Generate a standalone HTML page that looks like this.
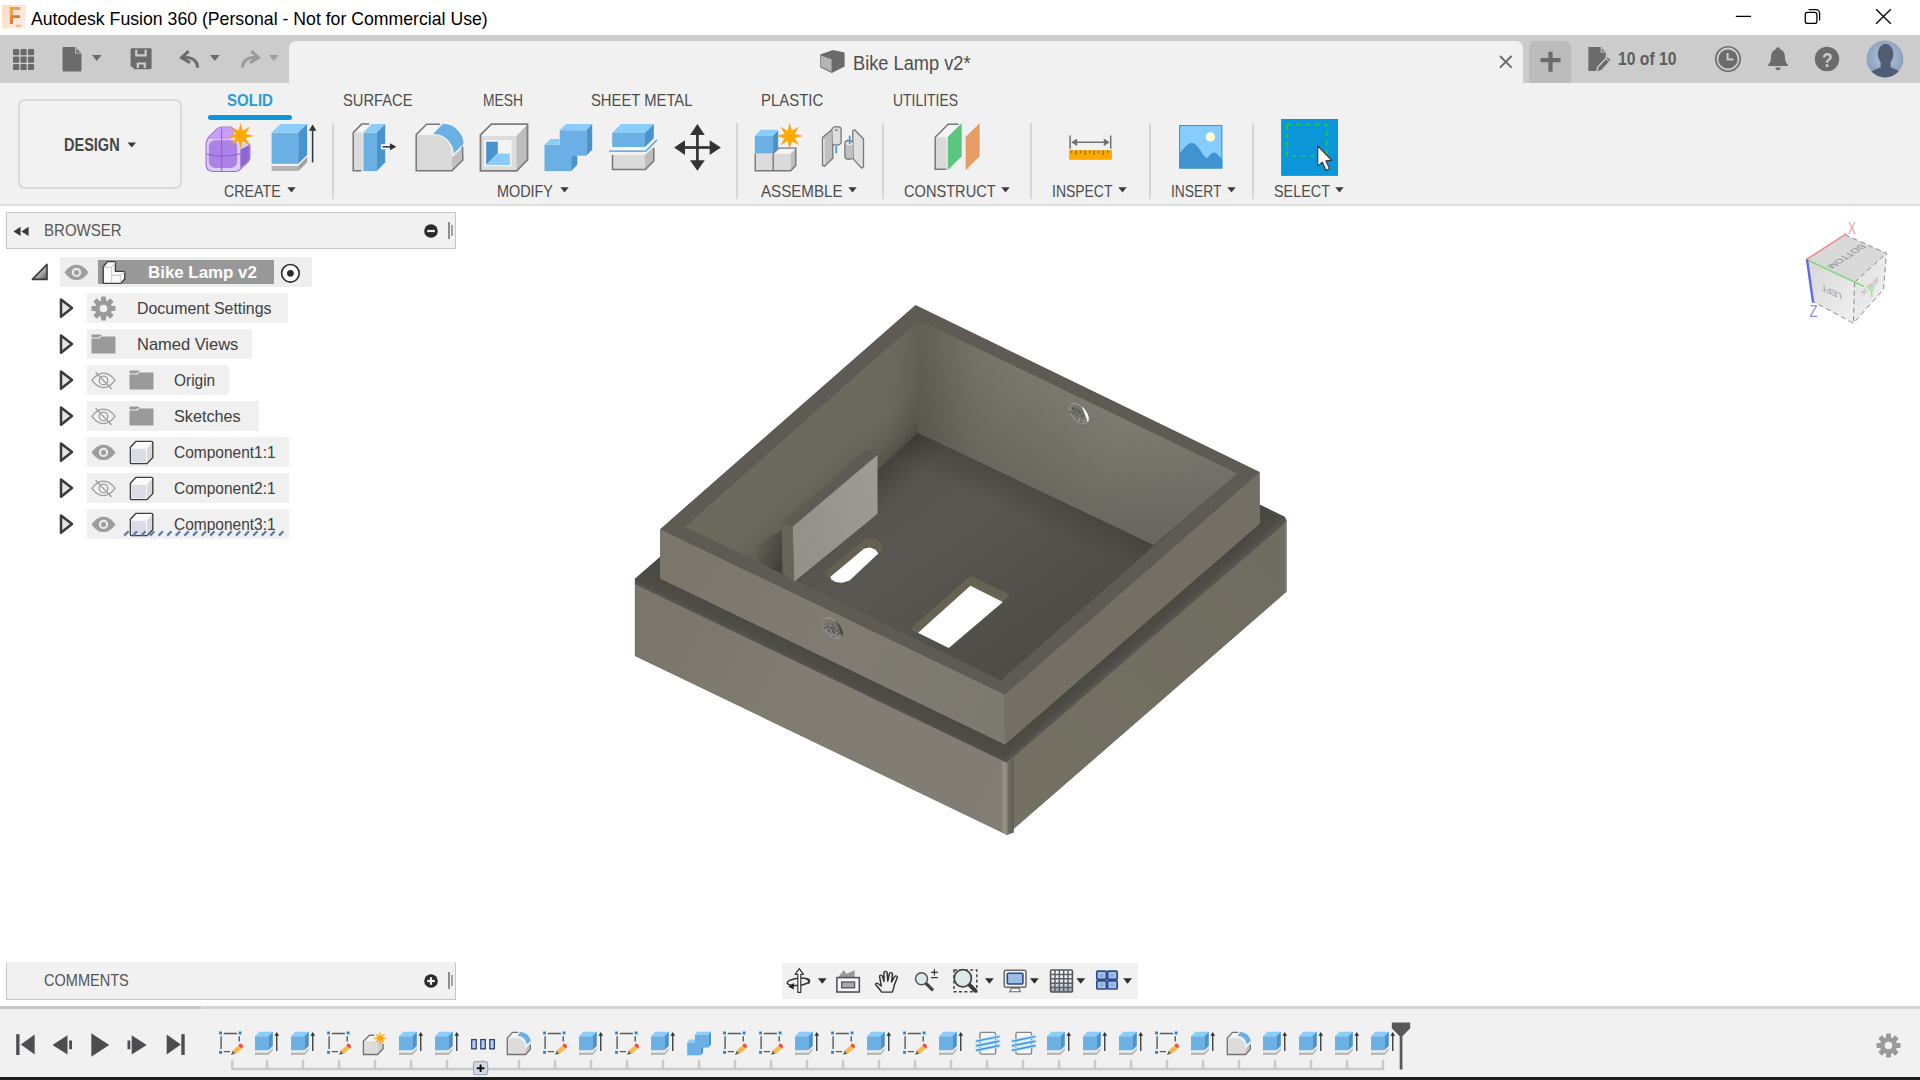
<!DOCTYPE html>
<html lang="en"><head><meta charset="utf-8"><title>Autodesk Fusion 360</title>
<style>
html,body{margin:0;padding:0;}
body{width:1920px;height:1080px;overflow:hidden;background:#fff;position:relative;font-family:"Liberation Sans",sans-serif;}
.a{position:absolute;display:block;}
.t{position:absolute;white-space:nowrap;transform-origin:0 0;}
</style></head><body>
<div class="a" style="left:0px;top:0px;width:1920px;height:35px;background:#fff;"></div>
<svg class="a" style="left:2px;top:5px;" width="24" height="24" viewBox="0 0 24 24"><defs><linearGradient id="fg" x1="0" y1="0" x2="1" y2="1"><stop offset="0" stop-color="#fbdcc0"/><stop offset=".5" stop-color="#fbe6d3"/><stop offset="1" stop-color="#fdf1e6"/></linearGradient>
<linearGradient id="ff" x1="0" y1="0" x2=".4" y2="1"><stop offset="0" stop-color="#dd8530"/><stop offset=".4" stop-color="#f3a546"/><stop offset=".6" stop-color="#d9802a"/><stop offset="1" stop-color="#c96f20"/></linearGradient></defs>
<rect x=".2" y="0" width="23.600" height="23.700" fill="url(#fg)"/>
<text transform="translate(6.800,19.200) scale(.8,1)" font-family="Liberation Sans, sans-serif" font-weight="bold" font-size="24.300" fill="url(#ff)">F</text>
<rect x="13.500" y="19.800" width="6" height="1.900" rx=".6" fill="#f2b47c"/></svg>
<div class="t" style="left:30.80px;top:10.40px;font-size:18.31px;line-height:18.31px;color:#000;transform:scaleX(0.9659);">Autodesk Fusion 360 (Personal - Not for Commercial Use)</div>
<svg class="a" style="left:1720px;top:0px;" width="200" height="35" viewBox="0 0 200 35"><g fill="none" stroke="#000" stroke-width="1.3">
<path d="M15.8 16.4H31"/>
<rect x="85.3" y="12.4" width="11.6" height="11" rx="2.2"/>
<path d="M88.6 9.6h7.4a3.6 3.6 0 0 1 3.6 3.6v7.2"/>
<path d="M156.1 9.3l14.7 14.5M170.8 9.3l-14.7 14.5"/></g></svg>
<div class="a" style="left:0px;top:35px;width:1920px;height:48px;background:#cccccc;"></div>
<div class="a" style="left:289px;top:40.5px;width:1234px;height:43px;background:#f1f1f1;border-radius:7px 7px 0 0;"></div>
<div class="a" style="left:1529px;top:41px;width:42px;height:42px;background:#bcbcbc;border-radius:6px 6px 0 0;"></div>
<svg class="a" style="left:1529px;top:41px;" width="42" height="42" viewBox="0 0 42 42"><path d="M11.5 19.2h20M21.5 10.8v20" stroke="#6b6b6b" stroke-width="4.2" fill="none"/></svg>
<svg class="a" style="left:13.3px;top:48.5px;" width="22" height="22" viewBox="0 0 22 22"><rect x="0.00" y="0.00" width="6.200" height="6.200" rx="1" fill="#6b6b6b"/><rect x="7.45" y="0.00" width="6.200" height="6.200" rx="1" fill="#6b6b6b"/><rect x="14.90" y="0.00" width="6.200" height="6.200" rx="1" fill="#6b6b6b"/><rect x="0.00" y="7.45" width="6.200" height="6.200" rx="1" fill="#6b6b6b"/><rect x="7.45" y="7.45" width="6.200" height="6.200" rx="1" fill="#6b6b6b"/><rect x="14.90" y="7.45" width="6.200" height="6.200" rx="1" fill="#6b6b6b"/><rect x="0.00" y="14.90" width="6.200" height="6.200" rx="1" fill="#6b6b6b"/><rect x="7.45" y="14.90" width="6.200" height="6.200" rx="1" fill="#6b6b6b"/><rect x="14.90" y="14.90" width="6.200" height="6.200" rx="1" fill="#6b6b6b"/></svg>
<svg class="a" style="left:62px;top:46px;" width="22" height="26" viewBox="0 0 22 26"><path d="M1.5 1h12l6 6.2v17.3a1 1 0 0 1-1 1h-17a1 1 0 0 1-1-1V2a1 1 0 0 1 1-1z" fill="#6b6b6b"/><path d="M13.2 1v6.6h6.4z" fill="#cccccc"/><path d="M14.2 2.6l4 4.2h-4z" fill="#6b6b6b"/></svg>
<svg class="a" style="left:91px;top:54px;" width="12" height="8" viewBox="0 0 12 8"><path d="M1 1h9.6l-4.8 6z" fill="#6b6b6b"/></svg>
<svg class="a" style="left:130px;top:48px;" width="22" height="22" viewBox="0 0 22 22"><path d="M2 .2h18.200a1.400 1.400 0 0 1 1.400 1.400v18.200a1.400 1.400 0 0 1-1.400 1.400H4.600L.6 17.800V1.600A1.400 1.400 0 0 1 2 .2z" fill="#6b6b6b"/><path d="M6.250 1.800V7.400H15.600V1.800" fill="none" stroke="#cccccc" stroke-width="2.200"/><path d="M7.800 20V15.500H14.800V20" fill="none" stroke="#cccccc" stroke-width="2.200"/></svg>
<svg class="a" style="left:178px;top:48px;" width="24" height="22" viewBox="0 0 24 22"><path d="M5 9.800C12 8.600 19 11 19.600 19.600" fill="none" stroke="#6b6b6b" stroke-width="3.100" stroke-linecap="butt"/><path d="M10.600 3.200L3.600 9.800l8.400 4.800" fill="none" stroke="#6b6b6b" stroke-width="3.100" stroke-linecap="butt" stroke-linejoin="miter"/></svg>
<svg class="a" style="left:209px;top:54px;" width="12" height="8" viewBox="0 0 12 8"><path d="M1 1h9.6l-4.8 6z" fill="#6b6b6b"/></svg>
<svg class="a" style="left:238px;top:48px;" width="24" height="22" viewBox="0 0 24 22"><path d="M19 9.800C12 8.600 5 11 4.400 19.600" fill="none" stroke="#9a9a9a" stroke-width="3.100"/><path d="M13.400 3.200L20.400 9.800l-8.400 4.800" fill="none" stroke="#9a9a9a" stroke-width="3.100"/></svg>
<svg class="a" style="left:268px;top:54px;" width="12" height="8" viewBox="0 0 12 8"><path d="M1 1h9.6l-4.8 6z" fill="#9d9d9d"/></svg>
<svg class="a" style="left:819px;top:49px;" width="27" height="25" viewBox="0 0 27 25"><path d="M1.2 5.4L14 1l11.6 2.6v14L12.8 24 1.2 18.2z" fill="#6a6a6a"/><path d="M1.8 6.4l10.8 3.8v12.6L1.8 17.6z" fill="#b4b4b4"/></svg>
<div class="t" style="left:852.50px;top:53.94px;font-size:19.33px;line-height:19.33px;color:#4f4f4f;transform:scaleX(0.9427);">Bike Lamp v2*</div>
<svg class="a" style="left:1498px;top:54px;" width="16" height="16" viewBox="0 0 16 16"><path d="M2 2l11.6 11.6M13.6 2L2 13.6" stroke="#6b6b6b" stroke-width="1.9" fill="none"/></svg>
<svg class="a" style="left:1587px;top:46px;" width="27" height="26" viewBox="0 0 27 26"><path d="M1.4 1h12.4l5 5.2v5.4l-8.6 9.4-1 4H1.4z" fill="#6b6b6b"/><path d="M13.6 1v5.4h5.2z" fill="#cccccc"/><path d="M14.6 2.6l2.8 3h-2.8z" fill="#6b6b6b"/><path d="M20.6 10.6l3.8 3.4-9.8 10.4-5 1.6 1.4-5z" fill="#6b6b6b" stroke="#cccccc" stroke-width="1.2"/><path d="M19 12.6l3.4 3.2" stroke="#cccccc" stroke-width="1.1"/></svg>
<div class="t" style="left:1618.00px;top:51.09px;font-size:17.73px;line-height:17.73px;color:#555;font-weight:bold;transform:scaleX(0.8856);opacity:.92;">10 of 10</div>
<svg class="a" style="left:1714px;top:45px;" width="28" height="28" viewBox="0 0 28 28"><circle cx="14" cy="14" r="12.2" fill="none" stroke="#6b6b6b" stroke-width="1.6"/><circle cx="14" cy="14" r="9.6" fill="#6b6b6b"/><path d="M13.6 8v6.6h5.8" fill="none" stroke="#cccccc" stroke-width="2"/></svg>
<svg class="a" style="left:1766px;top:46px;" width="24" height="26" viewBox="0 0 24 26"><path d="M12 1.2c1.3 0 2 .9 2 2 3.6 1.2 5 4.4 5 8.2 0 3.8 1.2 5.6 2.8 7.2v1.4H2.2v-1.4C3.800 17 5 15.200 5 11.400c0-3.800 1.400-7 5-8.200 0-1.100.700-2 2-2z" fill="#6b6b6b"/><path d="M9.400 21.600h5.200a2.600 2.600 0 0 1-5.200 0z" fill="#6b6b6b"/></svg>
<svg class="a" style="left:1814px;top:46px;" width="26" height="26" viewBox="0 0 26 26"><circle cx="13" cy="13" r="12.2" fill="#6b6b6b"/></svg>
<div class="t" style="left:1821.60px;top:50.03px;font-size:20.64px;line-height:20.64px;color:#cccccc;font-weight:bold;transform:scaleX(0.8419);">?</div>
<svg class="a" style="left:1866px;top:40px;" width="38" height="38" viewBox="0 0 38 38"><defs><radialGradient id="av" cx=".5" cy=".45" r=".6"><stop offset="0" stop-color="#b7c7dc"/><stop offset="1" stop-color="#8499b8"/></radialGradient><clipPath id="avc"><circle cx="19" cy="19" r="18.400"/></clipPath></defs>
<circle cx="19" cy="19" r="18.400" fill="url(#av)"/>
<g clip-path="url(#avc)" fill="#4f5d75"><ellipse cx="19.600" cy="14" rx="7.800" ry="10.200"/><path d="M14.600 20h10v7.400c5 1.400 9 3.600 10.400 6.400v6h-31v-6c1.400-2.800 5.600-5 10.600-6.400z"/></g></svg>
<div class="a" style="left:0px;top:83px;width:1920px;height:122px;background:#f1f1f1;"></div>
<div class="a" style="left:0px;top:204.4px;width:1920px;height:1.6px;background:#dedede;"></div>
<div class="a" style="left:17.5px;top:98.5px;width:164px;height:90.5px;background:#f2f2f2;box-sizing:border-box;border:2px solid #dadada;border-radius:7px;"></div>
<div class="t" style="left:63.80px;top:136.69px;font-size:17.73px;line-height:17.73px;color:#484848;font-weight:bold;transform:scaleX(0.8191);">DESIGN</div>
<svg class="a" style="left:127px;top:141.5px;" width="10" height="6" viewBox="0 0 10 6"><path d="M.5 .5h8.6L4.8 5.6z" fill="#3c3c3c"/></svg>
<div class="t" style="left:227.00px;top:92.18px;font-size:17.15px;line-height:17.15px;color:#2a9bd7;font-weight:bold;transform:scaleX(0.8779);">SOLID</div>
<div class="a" style="left:207.5px;top:114.6px;width:84.4px;height:5px;background:#0f96d8;border-radius:2.5px;"></div>
<div class="t" style="left:342.50px;top:92.18px;font-size:17.15px;line-height:17.15px;color:#4c4c4c;transform:scaleX(0.8581);">SURFACE</div>
<div class="t" style="left:482.50px;top:92.18px;font-size:17.15px;line-height:17.15px;color:#4c4c4c;transform:scaleX(0.8070);">MESH</div>
<div class="t" style="left:591.00px;top:92.18px;font-size:17.15px;line-height:17.15px;color:#4c4c4c;transform:scaleX(0.8636);">SHEET METAL</div>
<div class="t" style="left:760.80px;top:92.18px;font-size:17.15px;line-height:17.15px;color:#4c4c4c;transform:scaleX(0.8702);">PLASTIC</div>
<div class="t" style="left:893.00px;top:92.18px;font-size:17.15px;line-height:17.15px;color:#4c4c4c;transform:scaleX(0.8120);">UTILITIES</div>
<div class="t" style="left:224.30px;top:183.38px;font-size:17.15px;line-height:17.15px;color:#4c4c4c;transform:scaleX(0.8301);">CREATE</div>
<svg class="a" style="left:287px;top:186.5px;" width="10" height="6" viewBox="0 0 10 6"><path d="M.3 .3h8.4L4.5 5.6z" fill="#3c3c3c"/></svg>
<div class="t" style="left:497.00px;top:183.38px;font-size:17.15px;line-height:17.15px;color:#4c4c4c;transform:scaleX(0.8394);">MODIFY</div>
<svg class="a" style="left:559.5px;top:186.5px;" width="10" height="6" viewBox="0 0 10 6"><path d="M.3 .3h8.4L4.5 5.6z" fill="#3c3c3c"/></svg>
<div class="t" style="left:761.00px;top:183.38px;font-size:17.15px;line-height:17.15px;color:#4c4c4c;transform:scaleX(0.8816);">ASSEMBLE</div>
<svg class="a" style="left:847.5px;top:186.5px;" width="10" height="6" viewBox="0 0 10 6"><path d="M.3 .3h8.4L4.5 5.6z" fill="#3c3c3c"/></svg>
<div class="t" style="left:903.80px;top:183.38px;font-size:17.15px;line-height:17.15px;color:#4c4c4c;transform:scaleX(0.8517);">CONSTRUCT</div>
<svg class="a" style="left:1000.5px;top:186.5px;" width="10" height="6" viewBox="0 0 10 6"><path d="M.3 .3h8.4L4.5 5.6z" fill="#3c3c3c"/></svg>
<div class="t" style="left:1052.00px;top:183.38px;font-size:17.15px;line-height:17.15px;color:#4c4c4c;transform:scaleX(0.8137);">INSPECT</div>
<svg class="a" style="left:1117.5px;top:186.5px;" width="10" height="6" viewBox="0 0 10 6"><path d="M.3 .3h8.4L4.5 5.6z" fill="#3c3c3c"/></svg>
<div class="t" style="left:1170.50px;top:183.38px;font-size:17.15px;line-height:17.15px;color:#4c4c4c;transform:scaleX(0.8067);">INSERT</div>
<svg class="a" style="left:1227px;top:186.5px;" width="10" height="6" viewBox="0 0 10 6"><path d="M.3 .3h8.4L4.5 5.6z" fill="#3c3c3c"/></svg>
<div class="t" style="left:1274.00px;top:183.38px;font-size:17.15px;line-height:17.15px;color:#4c4c4c;transform:scaleX(0.8394);">SELECT</div>
<svg class="a" style="left:1335px;top:186.5px;" width="10" height="6" viewBox="0 0 10 6"><path d="M.3 .3h8.4L4.5 5.6z" fill="#3c3c3c"/></svg>
<div class="a" style="left:332px;top:122.5px;width:2px;height:76.5px;background:#d6d6d6;"></div>
<div class="a" style="left:735.5px;top:122.5px;width:2px;height:76.5px;background:#d6d6d6;"></div>
<div class="a" style="left:881.7px;top:122.5px;width:2px;height:76.5px;background:#d6d6d6;"></div>
<div class="a" style="left:1030px;top:122.5px;width:2px;height:76.5px;background:#d6d6d6;"></div>
<div class="a" style="left:1148.7px;top:122.5px;width:2px;height:76.5px;background:#d6d6d6;"></div>
<div class="a" style="left:1252px;top:122.5px;width:2px;height:76.5px;background:#d6d6d6;"></div>
<svg class="a" style="left:0px;top:118px;" width="1920" height="62" viewBox="0 0 1920 62"><g transform="translate(200,0)"><path d="M5.500 27Q5.500 21.500 9.500 17.500L16 11Q18.400 8.500 22 8.500H31L50.500 27V39.500Q50.500 42.200 48.500 44.200L40.500 51.800Q38.200 54 35 54H13.600Q5.500 54 5.500 46z" fill="#9a6ad2"/><path d="M6.600 27.200Q6.600 22 10.300 18.300L16.700 11.800Q18.800 9.600 22 9.600H30.600L49.400 27.400V39.300Q49.400 41.700 47.700 43.400L39.800 51Q37.800 52.900 35 52.900H13.800Q6.600 52.900 6.600 45.800z" fill="#ddcdf6"/><path d="M8.500 20.500L16.900 11.900Q19 9.700 22 9.700H31l5.500 5-6 6.300H12z" fill="#c79bff"/><path d="M40.300 31.500l9.100-4.600V39.200q0 2.400-1.700 4l-7.400 7z" fill="#9168d0"/><rect x="8.800" y="22.200" width="28.400" height="27.800" rx="6.500" fill="#ac82e8"/><path d="M21.700 11v41.800M6.800 36.200c10 2.400 22 2.400 33.400-.4M45.400 29v16.800" fill="none" stroke="#8a60c4" stroke-width="1"/><circle cx="40.600" cy="17.900" r="7.400" fill="#f1f1f1"/><polygon points="40.60,5.50 42.59,13.10 49.37,9.13 45.40,15.91 53.00,17.90 45.40,19.89 49.37,26.67 42.59,22.70 40.60,30.30 38.61,22.70 31.83,26.67 35.80,19.89 28.20,17.90 35.80,15.91 31.83,9.13 38.61,13.10" fill="#ffa800" stroke="#f0a020" stroke-width=".4"/></g><g transform="translate(200,0)"><polygon points="71.6,48 98.2,48 107.1,39.300 107.1,44.300 98.2,53.100 71.6,53.100" fill="#b4b4b4" /><polygon points="98.2,48 107.1,39.300 107.1,44.300 98.2,53.100" fill="#a2a2a2" /><polygon points="71.6,14.600 98.2,14.600 98.2,45.800 71.6,45.800" fill="#6ab0e4" /><polygon points="71.6,14.600 80.6,6 107.1,6 98.2,14.600" fill="#8accfa" /><polygon points="98.2,14.600 107.1,6 107.1,36.900 98.2,45.800" fill="#4994cf" /><path d="M112.600 10v34.400" stroke="#333" stroke-width="1.500"/><path d="M108.900 12.700h7.500L112.650 6.600z" fill="#333"/></g><g transform="translate(340,0)"><polygon points="13.200,14.600 21.700,6.100 30,6.100 22,14.600" fill="#f5f5f5" /><polygon points="13.200,14.600 22.400,14.600 22.400,52.800 13.200,52.800" fill="#dadada" /><path d="M21.400 52.800H13.200V14.600L21.700 6.100H29.200" fill="none" stroke="#777" stroke-width="1.500"/><polygon points="23.400,14.600 36.900,14.600 36.900,53.100 23.400,53.100" fill="#6ab0e4" /><polygon points="23.400,14.600 31.800,6 45.200,6 36.900,14.600" fill="#8accfa" /><polygon points="36.900,14.600 45.200,6 45.200,44.300 36.900,53.100" fill="#4994cf" /><rect x="41" y="26.200" width="5" height="5.200" fill="#f4f4f4"/><path d="M42.700 28.800h8" stroke="#333" stroke-width="1.500"/><path d="M50 25.300v7l6.400-3.500z" fill="#333"/></g><g transform="translate(340,0)"><polygon points="76.200,16.600 86.700,6.200 101,6.200 93.500,16.900" fill="#f5f5f5" /><path d="M76.500 16.900H93.400A18.300 18.300 0 0 1 111.700 35.200V52.500H76.500z" fill="#dadada"/><path d="M93.100 15.900L102.900 5.800A21 21 0 0 1 123.600 25.700L113.700 35.500A20 20 0 0 0 93.100 15.900z" fill="#6ab0e4"/><polygon points="111.700,39.300 122.500,28.400 122.900,42 112,52.800" fill="#c0c0c0" /><path d="M112.300 38.500L122.400 28.500" stroke="#ececec" stroke-width="1.400"/><path d="M100.200 6.200H86.700L76.200 16.600V52.800H112L122.900 42L122.500 28.400" fill="none" stroke="#777" stroke-width="1.500"/></g><g transform="translate(470,0)"><polygon points="10.500,16.900 21.300,6.200 57.500,6.200 46.700,17.900 11.200,17.900" fill="#f5f5f5" /><polygon points="11.200,17.900 46.400,17.900 46.400,52.100 11.200,52.100" fill="#dcdcdc" /><polygon points="46.400,17.900 57.200,6.800 57.200,41.600 46.400,52.100" fill="#bdbdbd" /><rect x="14.200" y="22" width="27.400" height="26.400" fill="#f3f3f3"/><polygon points="16.200,23.700 27.800,23.700 27.800,35.200 16.200,46.700" fill="#4994cf" /><polygon points="16.200,46.700 27.800,35.500 39.900,35.500 39.900,47 16.200,47" fill="#8accfa" /><polygon points="10.500,16.900 21.300,6.200 57.500,6.200 57.500,42 46.700,52.800 10.500,52.800" fill="none" stroke="#7d7d7d" stroke-width="1.800"/></g><g transform="translate(470,0)"><polygon points="89.700,12.200 116.500,12.200 116.500,37.600 89.700,37.600" fill="#6ab0e4" /><polygon points="89.700,12.200 95.800,6 122.200,6 116.500,12.200" fill="#8accfa" /><polygon points="116.500,12.200 122.200,6 122.200,31.800 116.500,37.600" fill="#4994cf" /><polygon points="74.500,26.700 101.200,26.700 101.200,53.100 74.500,53.100" fill="#6ab0e4" /><polygon points="74.500,26.700 80.600,21 89.700,21 89.700,26.700" fill="#8accfa" /><polygon points="101.200,37.600 107.300,37.600 107.300,46.700 101.200,53.100" fill="#4994cf" /></g><g transform="translate(600,0)"><polygon points="12.500,36.900 45,36.900 45,51.500 12.500,51.500" fill="#dadada" /><polygon points="45,36.900 53.800,29.100 53.800,43 45,51.500" fill="#bdbdbd" /><path d="M12.500 37V51.500H45.400L53.800 43V30" fill="none" stroke="#777" stroke-width="1.500"/><polygon points="9.100,30.200 45,30.200 56,19.500 56.900,22 45.700,33.200 9.100,33.200" fill="#fbf5f0" /><path d="M9.100 33.200H45.700L56.900 22" fill="none" stroke="#3a9ae6" stroke-width="1.300"/><polygon points="12.200,14.900 45,14.900 45,29.100 12.200,29.100" fill="#6ab0e4" /><polygon points="12.200,14.900 21,6 53.800,6 45,14.900" fill="#8accfa" /><polygon points="45,14.900 53.800,6 53.800,20.300 45,29.100" fill="#4994cf" /></g><g transform="translate(600,0)" fill="#333"><rect x="96.050" y="12" width="2.700" height="35"/><rect x="80" y="28.150" width="35" height="2.700"/><path d="M97.400 6.100L104.800 16.900H90z"/><path d="M97.400 52.800L104.800 42.300H90z"/><path d="M74.100 29.500L85 22.300V36.900z"/><path d="M120.900 29.500L109.700 22.300V36.900z"/></g><g transform="translate(745,0)"><polygon points="10.200,35.900 28.100,35.900 28.100,52.800 10.200,52.800" fill="#dcdcdc" /><polygon points="28.400,35.900 45.700,35.900 45.700,52.800 28.400,52.800" fill="#dadada" /><polygon points="28.400,35.500 33.900,30.100 50.800,30.100 45.700,35.500" fill="#f5f5f5" /><polygon points="45.700,35.500 50.800,30.500 50.800,47.400 45.700,52.800" fill="#bdbdbd" /><path d="M10.200 35.500V52.800H45.700L50.800 47.400V30.100H33.900L28.200 35.500V52.800" fill="none" stroke="#777" stroke-width="1.400"/><polygon points="9.800,17.900 27.800,17.900 27.800,35.500 9.800,35.500" fill="#6ab0e4" /><polygon points="9.800,17.900 15.600,11.800 33.200,11.800 27.800,17.900" fill="#8accfa" /><polygon points="27.800,17.900 33.200,12.200 33.200,29.800 27.800,35.500" fill="#4994cf" /><circle cx="44.700" cy="17.900" r="6" fill="#f1f1f1"/><polygon points="44.70,5.50 46.69,13.10 53.47,9.13 49.50,15.91 57.10,17.90 49.50,19.89 53.47,26.67 46.69,22.70 44.70,30.30 42.71,22.70 35.93,26.67 39.90,19.89 32.30,17.90 39.90,15.91 35.93,9.13 42.71,13.10" fill="#ffa800" stroke="#f0a020" stroke-width=".4"/></g><g transform="translate(745,0)"><path d="M77.500 19.600L87.300 11.200L88 40L79.500 48.400L77.500 47.400z" fill="#c0c0c0" stroke="#777" stroke-width="1.300" stroke-linejoin="round"/><path d="M78.800 20.600L79.200 46.600" stroke="#ececec" stroke-width="1.200"/><path d="M87.300 11.200C87.300 7.800 96.100 7.800 96.100 11.200V24.600C96.100 27.600 87.800 27.600 87.800 26" fill="#dedede" stroke="#777" stroke-width="1.300"/><ellipse cx="91.200" cy="12.100" rx="1.700" ry=".9" fill="#888"/><path d="M91.200 28.300V35.200" stroke="#3a9ae6" stroke-width="1.700"/><path d="M107.700 12.900L109.700 11.800L118.500 21V48.700L116.500 50.100L108 40.600z" fill="#e0e0e0" stroke="#777" stroke-width="1.300" stroke-linejoin="round"/><path d="M107.800 24.200C104.500 21.200 99.900 22 99.900 25.400V38.400C99.900 41.800 105 41.800 108 40.200" fill="#c0c0c0" stroke="#777" stroke-width="1.300"/><ellipse cx="104.200" cy="25.600" rx="3.600" ry="1.700" fill="#e6e6e6"/><path d="M104.700 17.600V26" stroke="#3a9ae6" stroke-width="1.700"/></g><g transform="translate(920,0)"><polygon points="15.200,19.300 28.100,6.200 39,6.200 27,19.300" fill="#f5f5f5" /><polygon points="16,19.300 26.300,19.300 26.300,50.600 16,50.600" fill="#dadada" /><path d="M26.400 51.300H15.200V19.300L28.100 6.200H38.600" fill="none" stroke="#777" stroke-width="1.500"/><polygon points="28.100,19 41.300,6.100 41.300,38.300 28.100,51.500" fill="#5ac680" stroke="#50ba76" stroke-width=".6"/><polygon points="46,19 59.200,6.100 59.200,38.300 46,51.500" fill="#e79d67" stroke="#d98f5a" stroke-width=".6"/></g><g transform="translate(1050,0)"><path d="M20.100 17.600V30.800M60.700 17.600V30.800M24 24.200H57" stroke="#727272" stroke-width="1.500" fill="none"/><path d="M21.200 24.200L27.100 20.500V27.900zM59.700 24.200L53.800 20.500V27.900z" fill="#727272"/><rect x="19.500" y="32.500" width="42" height="8.800" fill="#ffaa00" stroke="#ee9c00" stroke-width=".6"/><path d="M21.7 32.500V35.2" stroke="#8d6b25" stroke-width="1.200"/><path d="M26.1 32.500V36.9" stroke="#8d6b25" stroke-width="1.200"/><path d="M30.8 32.500V35.2" stroke="#8d6b25" stroke-width="1.200"/><path d="M35.2 32.500V36.9" stroke="#8d6b25" stroke-width="1.200"/><path d="M39.6 32.500V35.2" stroke="#8d6b25" stroke-width="1.200"/><path d="M44.1 32.500V36.9" stroke="#8d6b25" stroke-width="1.200"/><path d="M48.7 32.500V35.2" stroke="#8d6b25" stroke-width="1.200"/><path d="M53.1 32.500V36.9" stroke="#8d6b25" stroke-width="1.200"/><path d="M57.8 32.500V35.2" stroke="#8d6b25" stroke-width="1.200"/></g><g transform="translate(0,-118)"><rect x="1179.100" y="125" width="43.200" height="43.400" fill="#86ccfd"/><path d="M1179.100 154.600C1184 148 1187.600 143.100 1192 143.100C1197.600 143.100 1201.600 154.600 1206.600 158.600C1209.400 155.600 1211.400 152.500 1214 152.500C1217 152.500 1219.600 156.600 1222.300 159.700V168.400H1179.100z" fill="#3f93cf"/><circle cx="1210.500" cy="137" r="4.700" fill="#feffcc"/><rect x="1179.600" y="125.500" width="42.200" height="42.400" fill="none" stroke="#3f93cf" stroke-width="1"/><rect x="1281.100" y="119" width="56.900" height="56.900" fill="#0a96d8"/><rect x="1286.700" y="124.600" width="40" height="31.200" fill="none" stroke="#1fc35c" stroke-width="1.600" stroke-dasharray="5.400 3.800"/><path d="M1317.700 145.900V166.100L1322.300 162.100L1326 170.400L1329.600 168.800L1325.900 160.800L1331.700 160.400z" fill="#fff" stroke="#3a3a3a" stroke-width="1.200" stroke-linejoin="round"/></g></svg>
<div class="a" style="left:6px;top:212px;width:449.5px;height:37px;background:#f1f1f1;box-sizing:border-box;border:1.4px solid #c6c6c6;"></div>
<svg class="a" style="left:13px;top:226px;" width="17" height="11" viewBox="0 0 17 11"><path d="M.4 5.400L7.600 .8V10zM8.400 5.400L15.600 .8V10z" fill="#3a3a3a"/></svg>
<div class="t" style="left:43.80px;top:222.36px;font-size:17.30px;line-height:17.30px;color:#555;transform:scaleX(0.8704);">BROWSER</div>
<svg class="a" style="left:423px;top:223px;" width="16" height="16" viewBox="0 0 16 16"><circle cx="8" cy="8" r="6.800" fill="#2b2b2b"/><rect x="4.200" y="6.900" width="7.600" height="2.200" fill="#f1f1f1"/></svg>
<div class="a" style="left:448.1px;top:222.2px;width:1.9px;height:17px;background:#8e8e8e;"></div>
<div class="a" style="left:451.3px;top:225.4px;width:1.6px;height:10.6px;background:#a2a2a2;"></div>
<div class="a" style="left:60px;top:257px;width:251.7px;height:29.8px;background:#eeeeee;"></div>
<svg class="a" style="left:30px;top:262px;" width="20" height="20" viewBox="0 0 20 20"><defs><linearGradient id="tg" x1="0" y1="0" x2="1" y2="1"><stop offset=".3" stop-color="#e8e8e8"/><stop offset="1" stop-color="#555"/></linearGradient></defs><path d="M17 2.400V17.400H2.400z" fill="url(#tg)" stroke="#3a3a3a" stroke-width="1.600" stroke-linejoin="round"/></svg>
<svg class="a" style="left:64.2px;top:263.8px;" width="25" height="17" viewBox="0 0 25 17"><path d="M.6 8.400C4.500 2.800 8.500 .8 12.500 .8S20.500 2.800 24.400 8.400C20.500 14 16.500 16 12.500 16S4.500 14 .6 8.400z" fill="#9d9d9d"/><circle cx="12.500" cy="8.400" r="4.700" fill="#e9e9e9"/><circle cx="12.500" cy="8.400" r="2.500" fill="#9d9d9d"/></svg>
<div class="a" style="left:97.5px;top:260.2px;width:176.8px;height:23.6px;background:#989898;"></div>
<svg class="a" style="left:101px;top:259px;" width="26" height="26" viewBox="0 0 26 26"><path d="M2.200 8L6.400 2.600H13.400Q14.400 2.600 14.400 3.600V12.400H22.600Q23.800 12.400 23.800 13.600V20L19.600 24.400H3.400Q2.200 24.400 2.200 23.200z" fill="#fbfbfb" stroke="#3f3f3f" stroke-width="1.400" stroke-linejoin="round"/><path d="M2.800 8.400H10.600V23.800M10.600 8.400L14 3.400M10.600 16.400H19.400V23.800M19.400 16.400L23.400 13" fill="none" stroke="#cfcfd8" stroke-width="1.200"/></svg>
<div class="t" style="left:147.70px;top:263.90px;font-size:17.01px;line-height:17.01px;color:#fff;font-weight:bold;transform:scaleX(0.9932);">Bike Lamp v2</div>
<svg class="a" style="left:280px;top:262.5px;" width="21" height="21" viewBox="0 0 21 21"><circle cx="10.400" cy="10.300" r="8.800" fill="#fff" stroke="#2b2b2b" stroke-width="1.600"/><circle cx="10.400" cy="10.300" r="3.400" fill="#2b2b2b"/></svg>
<div class="a" style="left:87.2px;top:293.4px;width:200.60000000000002px;height:29.6px;background:#f0f0f0;"></div>
<svg class="a" style="left:59.2px;top:297.4px;" width="16" height="22" viewBox="0 0 16 22"><path d="M2 2.400L13 11L2 19.800z" fill="#e2e2e8" stroke="#3a3a3a" stroke-width="2.500" stroke-linejoin="round"/></svg>
<svg class="a" style="left:91px;top:295.7px;" width="25" height="25" viewBox="0 0 25 25"><g transform="translate(12.500,12.500)" fill="#9a9a9a"><rect x="-2.500" y="-12" width="5" height="7" rx=".8" transform="rotate(0)"/><rect x="-2.500" y="-12" width="5" height="7" rx=".8" transform="rotate(45)"/><rect x="-2.500" y="-12" width="5" height="7" rx=".8" transform="rotate(90)"/><rect x="-2.500" y="-12" width="5" height="7" rx=".8" transform="rotate(135)"/><rect x="-2.500" y="-12" width="5" height="7" rx=".8" transform="rotate(180)"/><rect x="-2.500" y="-12" width="5" height="7" rx=".8" transform="rotate(225)"/><rect x="-2.500" y="-12" width="5" height="7" rx=".8" transform="rotate(270)"/><rect x="-2.500" y="-12" width="5" height="7" rx=".8" transform="rotate(315)"/><circle r="8.600"/><circle r="3.800" fill="#f0f0f0"/></g></svg>
<div class="t" style="left:136.80px;top:299.90px;font-size:17.01px;line-height:17.01px;color:#3f3f3f;transform:scaleX(0.9360);">Document Settings</div>
<div class="a" style="left:87.2px;top:329.4px;width:164.60000000000002px;height:29.6px;background:#f0f0f0;"></div>
<svg class="a" style="left:59.2px;top:333.4px;" width="16" height="22" viewBox="0 0 16 22"><path d="M2 2.400L13 11L2 19.800z" fill="#e2e2e8" stroke="#3a3a3a" stroke-width="2.500" stroke-linejoin="round"/></svg>
<svg class="a" style="left:91px;top:332.79999999999995px;" width="25" height="21" viewBox="0 0 25 21"><path d="M.5 1.600H9.500L11 3.200H8.800L7.600 4.600H.5z" fill="#9a9a9a"/><path d="M.5 5.400H8.400L10.200 3.600H24.500V20.400H.5z" fill="#9a9a9a"/></svg>
<div class="t" style="left:137.00px;top:335.90px;font-size:17.01px;line-height:17.01px;color:#3f3f3f;transform:scaleX(0.9686);">Named Views</div>
<div class="a" style="left:87.2px;top:365.4px;width:142.0px;height:29.6px;background:#f0f0f0;"></div>
<svg class="a" style="left:59.2px;top:369.4px;" width="16" height="22" viewBox="0 0 16 22"><path d="M2 2.400L13 11L2 19.800z" fill="#e2e2e8" stroke="#3a3a3a" stroke-width="2.500" stroke-linejoin="round"/></svg>
<svg class="a" style="left:91.2px;top:370.79999999999995px;" width="25" height="19" viewBox="0 0 25 19"><path d="M1 9.400C4.800 4.200 8.600 2.200 12.500 2.200S20.200 4.200 24 9.400C20.200 14.600 16.400 16.600 12.500 16.600S4.800 14.600 1 9.400z" fill="none" stroke="#9d9d9d" stroke-width="1.300"/><circle cx="12.500" cy="9.400" r="4.300" fill="none" stroke="#9d9d9d" stroke-width="1.300"/><path d="M4.600 1.200L20.600 18" stroke="#9d9d9d" stroke-width="1.300"/></svg>
<svg class="a" style="left:128.6px;top:368.79999999999995px;" width="25" height="21" viewBox="0 0 25 21"><path d="M.5 1.600H9.500L11 3.200H8.800L7.600 4.600H.5z" fill="#9a9a9a"/><path d="M.5 5.400H8.400L10.200 3.600H24.500V20.400H.5z" fill="#9a9a9a"/></svg>
<div class="t" style="left:174.30px;top:371.90px;font-size:17.01px;line-height:17.01px;color:#3f3f3f;transform:scaleX(0.9082);">Origin</div>
<div class="a" style="left:87.2px;top:401.4px;width:172.10000000000002px;height:29.6px;background:#f0f0f0;"></div>
<svg class="a" style="left:59.2px;top:405.4px;" width="16" height="22" viewBox="0 0 16 22"><path d="M2 2.400L13 11L2 19.800z" fill="#e2e2e8" stroke="#3a3a3a" stroke-width="2.500" stroke-linejoin="round"/></svg>
<svg class="a" style="left:91.2px;top:406.79999999999995px;" width="25" height="19" viewBox="0 0 25 19"><path d="M1 9.400C4.800 4.200 8.600 2.200 12.500 2.200S20.200 4.200 24 9.400C20.200 14.600 16.400 16.600 12.500 16.600S4.800 14.600 1 9.400z" fill="none" stroke="#9d9d9d" stroke-width="1.300"/><circle cx="12.500" cy="9.400" r="4.300" fill="none" stroke="#9d9d9d" stroke-width="1.300"/><path d="M4.600 1.200L20.600 18" stroke="#9d9d9d" stroke-width="1.300"/></svg>
<svg class="a" style="left:128.6px;top:404.79999999999995px;" width="25" height="21" viewBox="0 0 25 21"><path d="M.5 1.600H9.500L11 3.200H8.800L7.600 4.600H.5z" fill="#9a9a9a"/><path d="M.5 5.400H8.400L10.200 3.600H24.500V20.400H.5z" fill="#9a9a9a"/></svg>
<div class="t" style="left:174.30px;top:407.90px;font-size:17.01px;line-height:17.01px;color:#3f3f3f;transform:scaleX(0.9537);">Sketches</div>
<div class="a" style="left:87.2px;top:437.4px;width:202.10000000000002px;height:29.6px;background:#f0f0f0;"></div>
<svg class="a" style="left:59.2px;top:441.4px;" width="16" height="22" viewBox="0 0 16 22"><path d="M2 2.400L13 11L2 19.800z" fill="#e2e2e8" stroke="#3a3a3a" stroke-width="2.500" stroke-linejoin="round"/></svg>
<svg class="a" style="left:91.2px;top:443.79999999999995px;" width="25" height="17" viewBox="0 0 25 17"><path d="M.6 8.400C4.500 2.800 8.500 .8 12.500 .8S20.500 2.800 24.400 8.400C20.500 14 16.500 16 12.500 16S4.500 14 .6 8.400z" fill="#9d9d9d"/><circle cx="12.500" cy="8.400" r="4.700" fill="#e9e9e9"/><circle cx="12.500" cy="8.400" r="2.500" fill="#9d9d9d"/></svg>
<svg class="a" style="left:128.6px;top:440.0px;" width="25" height="25" viewBox="0 0 25 25"><path d="M1.400 7.200L6.800 1.400H22.600Q23.800 1.400 23.800 2.600V17.400L18 23.600H2.600Q1.400 23.600 1.400 22.400z" fill="#fafafa" stroke="#3f3f3f" stroke-width="1.400" stroke-linejoin="round"/><path d="M18 8.400L23 3V17L18 22.400z" fill="#d8d8e0"/><rect x="3" y="8.800" width="14" height="13.600" fill="#dcdce6"/></svg>
<div class="t" style="left:174.30px;top:443.90px;font-size:17.01px;line-height:17.01px;color:#3f3f3f;transform:scaleX(0.9107);">Component1:1</div>
<div class="a" style="left:87.2px;top:473.4px;width:202.10000000000002px;height:29.6px;background:#f0f0f0;"></div>
<svg class="a" style="left:59.2px;top:477.4px;" width="16" height="22" viewBox="0 0 16 22"><path d="M2 2.400L13 11L2 19.800z" fill="#e2e2e8" stroke="#3a3a3a" stroke-width="2.500" stroke-linejoin="round"/></svg>
<svg class="a" style="left:91.2px;top:478.79999999999995px;" width="25" height="19" viewBox="0 0 25 19"><path d="M1 9.400C4.800 4.200 8.600 2.200 12.500 2.200S20.200 4.200 24 9.400C20.200 14.600 16.400 16.600 12.500 16.600S4.800 14.600 1 9.400z" fill="none" stroke="#9d9d9d" stroke-width="1.300"/><circle cx="12.500" cy="9.400" r="4.300" fill="none" stroke="#9d9d9d" stroke-width="1.300"/><path d="M4.600 1.200L20.600 18" stroke="#9d9d9d" stroke-width="1.300"/></svg>
<svg class="a" style="left:128.6px;top:476.0px;" width="25" height="25" viewBox="0 0 25 25"><path d="M1.400 7.200L6.800 1.400H22.600Q23.800 1.400 23.800 2.600V17.400L18 23.600H2.600Q1.400 23.600 1.400 22.400z" fill="#fafafa" stroke="#3f3f3f" stroke-width="1.400" stroke-linejoin="round"/><path d="M18 8.400L23 3V17L18 22.400z" fill="#d8d8e0"/><rect x="3" y="8.800" width="14" height="13.600" fill="#dcdce6"/></svg>
<div class="t" style="left:174.30px;top:479.90px;font-size:17.01px;line-height:17.01px;color:#3f3f3f;transform:scaleX(0.9107);">Component2:1</div>
<div class="a" style="left:87.2px;top:509.4px;width:202.10000000000002px;height:29.6px;background:#f0f0f0;"></div>
<svg class="a" style="left:59.2px;top:513.4px;" width="16" height="22" viewBox="0 0 16 22"><path d="M2 2.400L13 11L2 19.800z" fill="#e2e2e8" stroke="#3a3a3a" stroke-width="2.500" stroke-linejoin="round"/></svg>
<svg class="a" style="left:91.2px;top:515.8px;" width="25" height="17" viewBox="0 0 25 17"><path d="M.6 8.400C4.500 2.800 8.500 .8 12.500 .8S20.500 2.800 24.400 8.400C20.500 14 16.500 16 12.500 16S4.500 14 .6 8.400z" fill="#9d9d9d"/><circle cx="12.500" cy="8.400" r="4.700" fill="#e9e9e9"/><circle cx="12.500" cy="8.400" r="2.500" fill="#9d9d9d"/></svg>
<svg class="a" style="left:128.6px;top:512.0px;" width="25" height="25" viewBox="0 0 25 25"><path d="M1.400 7.200L6.800 1.400H22.600Q23.800 1.400 23.800 2.600V17.400L18 23.600H2.600Q1.400 23.600 1.400 22.400z" fill="#fafafa" stroke="#3f3f3f" stroke-width="1.400" stroke-linejoin="round"/><path d="M18 8.400L23 3V17L18 22.400z" fill="#d8d8e0"/><rect x="3" y="8.800" width="14" height="13.600" fill="#dcdce6"/></svg>
<div class="t" style="left:174.30px;top:515.90px;font-size:17.01px;line-height:17.01px;color:#3f3f3f;transform:scaleX(0.9107);">Component3:1</div>
<svg class="a" style="left:0px;top:530.4px;" width="300" height="7" viewBox="0 0 300 7"><path d="M124.2 5.600L128.5 1.300" stroke="#5d7cae" stroke-width="2.300" stroke-linecap="butt"/><path d="M132.8 5.600L137.1 1.300" stroke="#5d7cae" stroke-width="2.300" stroke-linecap="butt"/><path d="M141.4 5.600L145.7 1.300" stroke="#5d7cae" stroke-width="2.300" stroke-linecap="butt"/><path d="M150.0 5.600L154.3 1.300" stroke="#5d7cae" stroke-width="2.300" stroke-linecap="butt"/><path d="M158.6 5.600L162.9 1.300" stroke="#5d7cae" stroke-width="2.300" stroke-linecap="butt"/><path d="M167.2 5.600L171.5 1.300" stroke="#5d7cae" stroke-width="2.300" stroke-linecap="butt"/><path d="M175.8 5.600L180.1 1.300" stroke="#5d7cae" stroke-width="2.300" stroke-linecap="butt"/><path d="M184.4 5.600L188.7 1.300" stroke="#5d7cae" stroke-width="2.300" stroke-linecap="butt"/><path d="M193.0 5.600L197.3 1.300" stroke="#5d7cae" stroke-width="2.300" stroke-linecap="butt"/><path d="M201.6 5.600L205.9 1.300" stroke="#5d7cae" stroke-width="2.300" stroke-linecap="butt"/><path d="M210.2 5.600L214.5 1.300" stroke="#5d7cae" stroke-width="2.300" stroke-linecap="butt"/><path d="M218.8 5.600L223.1 1.300" stroke="#5d7cae" stroke-width="2.300" stroke-linecap="butt"/><path d="M227.4 5.600L231.7 1.300" stroke="#5d7cae" stroke-width="2.300" stroke-linecap="butt"/><path d="M236.0 5.600L240.3 1.300" stroke="#5d7cae" stroke-width="2.300" stroke-linecap="butt"/><path d="M244.6 5.600L248.9 1.300" stroke="#5d7cae" stroke-width="2.300" stroke-linecap="butt"/><path d="M253.2 5.600L257.5 1.300" stroke="#5d7cae" stroke-width="2.300" stroke-linecap="butt"/><path d="M261.8 5.600L266.1 1.300" stroke="#5d7cae" stroke-width="2.300" stroke-linecap="butt"/><path d="M270.4 5.600L274.7 1.300" stroke="#5d7cae" stroke-width="2.300" stroke-linecap="butt"/><path d="M279.0 5.600L283.3 1.300" stroke="#5d7cae" stroke-width="2.300" stroke-linecap="butt"/></svg>
<svg class="a" style="left:600px;top:280px;" width="720" height="580" viewBox="600 280 720 580"><defs>
<linearGradient id="gBL" gradientUnits="userSpaceOnUse" x1="800" y1="424" x2="858" y2="490"><stop offset="0" stop-color="#6c695e"/><stop offset=".55" stop-color="#6a675c"/><stop offset=".8" stop-color="#625f56"/><stop offset="1" stop-color="#524f48"/></linearGradient>
<linearGradient id="gCor" gradientUnits="userSpaceOnUse" x1="919" y1="0" x2="890" y2="0"><stop offset="0" stop-color="#2c2a25" stop-opacity=".14"/><stop offset="1" stop-color="#2c2a25" stop-opacity="0"/></linearGradient>
<linearGradient id="gCor2" gradientUnits="userSpaceOnUse" x1="919" y1="0" x2="975" y2="0"><stop offset="0" stop-color="#2c2a25" stop-opacity=".2"/><stop offset="1" stop-color="#2c2a25" stop-opacity="0"/></linearGradient>
<linearGradient id="gBR" gradientUnits="userSpaceOnUse" x1="920" y1="380" x2="1240" y2="500"><stop offset="0" stop-color="#706d63"/><stop offset=".25" stop-color="#78756b"/><stop offset=".6" stop-color="#7d7a71"/><stop offset="1" stop-color="#74716a"/></linearGradient>
<linearGradient id="gBRv" gradientUnits="userSpaceOnUse" x1="1080" y1="400" x2="1040" y2="500"><stop offset="0" stop-color="#000" stop-opacity="0"/><stop offset="1" stop-color="#000" stop-opacity=".14"/></linearGradient>
<linearGradient id="gFL" gradientUnits="userSpaceOnUse" x1="920" y1="440" x2="1060" y2="640"><stop offset="0" stop-color="#54524d"/><stop offset=".35" stop-color="#595751"/><stop offset="1" stop-color="#4d4c47"/></linearGradient>
<linearGradient id="gTab" gradientUnits="userSpaceOnUse" x1="800" y1="520" x2="880" y2="500"><stop offset="0" stop-color="#93918a"/><stop offset="1" stop-color="#9d9b94"/></linearGradient>
<linearGradient id="gOL" gradientUnits="userSpaceOnUse" x1="660" y1="560" x2="1005" y2="720"><stop offset="0" stop-color="#7a766c"/><stop offset=".5" stop-color="#807c73"/><stop offset="1" stop-color="#7c796f"/></linearGradient>
<linearGradient id="gBaseL" gradientUnits="userSpaceOnUse" x1="635" y1="620" x2="1008" y2="800"><stop offset="0" stop-color="#79756b"/><stop offset=".4" stop-color="#807c72"/><stop offset="1" stop-color="#827e75"/></linearGradient>
<linearGradient id="gBaseR" gradientUnits="userSpaceOnUse" x1="1010" y1="800" x2="1286" y2="555"><stop offset="0" stop-color="#747064"/><stop offset="1" stop-color="#6f6c61"/></linearGradient>
<linearGradient id="gEdge" gradientUnits="userSpaceOnUse" x1="1001.8" y1="0" x2="1013.8" y2="0"><stop offset="0" stop-color="#8d897e"/><stop offset=".3" stop-color="#989488"/><stop offset=".6" stop-color="#6a675d"/><stop offset="1" stop-color="#605d54"/></linearGradient>
<radialGradient id="gHole" cx=".45" cy=".4" r=".6"><stop offset="0" stop-color="#6c6b65"/><stop offset=".6" stop-color="#797872"/><stop offset="1" stop-color="#8e8d87"/></radialGradient>
<linearGradient id="gBandL" gradientUnits="userSpaceOnUse" x1="740" y1="617.4" x2="732.9" y2="632"><stop offset="0" stop-color="#4b4944"/><stop offset=".7" stop-color="#4f4d48"/><stop offset="1" stop-color="#5a5852"/></linearGradient>
<linearGradient id="gBandR" gradientUnits="userSpaceOnUse" x1="1132.5" y1="634" x2="1141.4" y2="644.3"><stop offset="0" stop-color="#4a4843"/><stop offset=".7" stop-color="#4e4c47"/><stop offset="1" stop-color="#575550"/></linearGradient>
<linearGradient id="gTabSh" gradientUnits="userSpaceOnUse" x1="782" y1="0" x2="752" y2="0"><stop offset="0" stop-color="#3d3b36" stop-opacity=".55"/><stop offset="1" stop-color="#3d3b36" stop-opacity="0"/></linearGradient>
<linearGradient id="gFs1" gradientUnits="userSpaceOnUse" x1="860" y1="486.4" x2="881" y2="508.800"><stop offset="0" stop-color="#282622" stop-opacity=".38"/><stop offset="1" stop-color="#282622" stop-opacity="0"/></linearGradient>
<linearGradient id="gFs2" gradientUnits="userSpaceOnUse" x1="1035" y1="488.4" x2="1021" y2="517.800"><stop offset="0" stop-color="#282622" stop-opacity=".26"/><stop offset="1" stop-color="#282622" stop-opacity="0"/></linearGradient>
</defs><polygon points="915.5,305.6 1259.4,472.3 1259.6,505 1286.4,520.6 1286.4,591.4 1007,834.4 635.2,655.8 635.2,579 660.4,557 660.4,529.4" fill="#66635a" /><polygon points="634.8,578.7 660.4,556.5 660.4,578.5 1005,744.6 1007,763 634.8,584.6" fill="url(#gBandL)" /><polygon points="1004.6,744.6 1259.9,523.4 1259.9,504.6 1284.8,516.8 1286.8,520.4 1286.8,522 1007,763" fill="url(#gBandR)" /><polygon points="634.8,584.3 1006,762.5 1007,834.9 634.8,656" fill="url(#gBaseL)" /><polygon points="1007,762.6 1286.8,521.4 1286.8,591.6 1007,834.9" fill="url(#gBaseR)" /><polygon points="1001.8,761 1007.8,762.9 1013.8,759 1013.8,832.4 1007,835 1001.8,832.6" fill="url(#gEdge)" /><polygon points="1285.6,521 1286.9,521 1286.9,591 1285.6,592.6" fill="#a8a08c" opacity=".7"/><polygon points="660.1,529.2 1004.7,694.6 1005,744.6 660,578.5" fill="url(#gOL)" /><polygon points="1004.7,694.6 1259.7,472 1259.9,523.4 1005,744.6" fill="#736f64" /><polygon points="915.5,305.1 1259.7,472 1004.7,694.6 660.1,529.2" fill="#5d5b54" /><polygon points="919,320 1237.5,473.4 1000.8,680.4 685,526.7" fill="url(#gFL)" /><polygon points="917.5,432.5 1153.8,545 1000.8,680.4 772,569" fill="url(#gFs1)" /><polygon points="917.5,432.5 1153.8,545 1000.8,680.4 772,569" fill="url(#gFs2)" /><polygon points="685,526.7 919,320 917.5,432.5 772,569" fill="url(#gBL)" /><polygon points="685,526.7 919,320 917.5,432.5 772,569" fill="url(#gCor)" /><polygon points="919,320 1237.5,473.4 1153.8,545 917.5,432.5" fill="url(#gBR)" /><polygon points="919,320 1237.5,473.4 1153.8,545 917.5,432.5" fill="url(#gBRv)" /><polygon points="919,320 1237.5,473.4 1153.8,545 917.5,432.5" fill="url(#gCor2)" /><polygon points="824.2,572.6 866.6,538.2 875,538.6 881.6,543.6 883,549.6 849.5,581.4 840,583.6 830,580" fill="#646153" /><polygon points="830.5,576.7 863.9,548.8 870,547.6 875.6,549.7 878.3,553.6 849.5,580.4 842.2,582.7 835.6,582 831.4,579.6" fill="#ffffff" /><polygon points="970.4,575.8 1010.2,594.8 948.8,648.1 909.9,629.1" fill="#666354" /><polygon points="970.4,585.8 1002.9,602 948.8,648.1 918.1,632.7" fill="#ffffff" /><polygon points="756,546 782,530 782.5,573 772,569 758,561" fill="url(#gTabSh)" /><polygon points="781.7,523.6 792.8,526.4 794.2,581.7 782.5,573" fill="#67645c" /><polygon points="781.7,523.6 867.5,448.8 877.5,455 792.8,526.4" fill="#5e5b54" /><polygon points="792.8,526.4 877.5,455 877.5,513.8 794.2,581.7" fill="url(#gTab)" /><g transform="translate(832.6,628.5) rotate(47)"><ellipse cx="0" cy="0" rx="13.200" ry="8" fill="#8d8c86" opacity=".3"/><ellipse cx="0" cy="0" rx="12.400" ry="7.400" fill="url(#gHole)"/><polygon points="-3.3,-7.3 -1.5,-7.5 0.3,-7.6 2.1,-7.5 3.8,-7.2 5.5,-6.8 7.0,-6.3 8.5,-5.6 9.7,-4.9 10.7,-4.0 11.6,-3.0 12.2,-2.0 12.5,-0.9 12.1,-0.9 11.8,-1.3 11.2,-1.6 10.4,-2.0 9.4,-2.5 8.2,-3.0 6.8,-3.5 5.3,-4.1 3.7,-4.8 2.0,-5.4 0.3,-6.1 -1.5,-6.6 -3.2,-7.1" fill="#4a4843"/><circle cx="4.2" cy="1.8" r=".800" fill="#3e3d39" opacity=".55"/><circle cx="0.1" cy="4.7" r=".800" fill="#3e3d39" opacity=".55"/><circle cx="-2.1" cy="0.5" r=".800" fill="#3e3d39" opacity=".55"/><circle cx="5.0" cy="-1.5" r=".800" fill="#3e3d39" opacity=".55"/><circle cx="-0.6" cy="0.2" r=".800" fill="#3e3d39" opacity=".55"/><circle cx="6.0" cy="5.3" r=".800" fill="#3e3d39" opacity=".55"/><circle cx="0.8" cy="-1.5" r=".800" fill="#3e3d39" opacity=".55"/><circle cx="-7.2" cy="1.3" r=".800" fill="#3e3d39" opacity=".55"/><circle cx="-4.6" cy="2.4" r=".800" fill="#3e3d39" opacity=".55"/><circle cx="2.2" cy="2.0" r=".800" fill="#3e3d39" opacity=".55"/><circle cx="6.0" cy="4.6" r=".800" fill="#3e3d39" opacity=".55"/><circle cx="7.5" cy="0.4" r=".800" fill="#3e3d39" opacity=".55"/><circle cx="8.7" cy="-2.1" r=".800" fill="#3e3d39" opacity=".55"/><circle cx="4.1" cy="-2.1" r=".800" fill="#3e3d39" opacity=".55"/><circle cx="-5.1" cy="5.4" r=".800" fill="#3e3d39" opacity=".55"/><circle cx="-3.1" cy="-2.5" r=".800" fill="#3e3d39" opacity=".55"/><circle cx="0.9" cy="0.5" r=".800" fill="#3e3d39" opacity=".55"/><circle cx="7.0" cy="-1.8" r=".800" fill="#3e3d39" opacity=".55"/><circle cx="-7.4" cy="2.7" r=".800" fill="#3e3d39" opacity=".55"/><circle cx="-1.4" cy="4.3" r=".800" fill="#3e3d39" opacity=".55"/><circle cx="-5.0" cy="2.5" r=".800" fill="#3e3d39" opacity=".55"/><circle cx="0.2" cy="3.8" r=".800" fill="#3e3d39" opacity=".55"/><circle cx="8.3" cy="3.8" r=".800" fill="#3e3d39" opacity=".55"/><circle cx="4.7" cy="1.5" r=".800" fill="#3e3d39" opacity=".55"/><circle cx="2.7" cy="1.3" r=".800" fill="#3e3d39" opacity=".55"/><circle cx="-6.2" cy="4.7" r=".800" fill="#3e3d39" opacity=".55"/><circle cx="-6.6" cy="2.5" r=".900" fill="#b4b3ad" opacity=".5"/><circle cx="8.3" cy="3.5" r=".900" fill="#b4b3ad" opacity=".5"/><circle cx="5.8" cy="-0.2" r=".900" fill="#b4b3ad" opacity=".5"/><circle cx="-3.4" cy="-0.7" r=".900" fill="#b4b3ad" opacity=".5"/><circle cx="5.9" cy="2.1" r=".900" fill="#b4b3ad" opacity=".5"/><circle cx="5.0" cy="4.6" r=".900" fill="#b4b3ad" opacity=".5"/><circle cx="1.0" cy="2.9" r=".900" fill="#b4b3ad" opacity=".5"/><path d="M-12.400 -1.500A12.400 7.400 0 0 1 -4 -7" fill="none" stroke="#b0a796" stroke-width=".900" opacity=".8"/></g><g transform="translate(1078.5,413.8) rotate(47)"><ellipse cx="0" cy="0" rx="13.200" ry="8" fill="#8d8c86" opacity=".3"/><ellipse cx="0" cy="0" rx="12.400" ry="7.400" fill="url(#gHole)"/><polygon points="-3.3,-7.3 -1.5,-7.5 0.3,-7.6 2.1,-7.5 3.8,-7.2 5.5,-6.8 7.0,-6.3 8.5,-5.6 9.7,-4.9 10.7,-4.0 11.6,-3.0 12.2,-2.0 12.5,-0.9 12.1,-0.9 11.8,-1.3 11.2,-1.6 10.4,-2.0 9.4,-2.5 8.2,-3.0 6.8,-3.5 5.3,-4.1 3.7,-4.8 2.0,-5.4 0.3,-6.1 -1.5,-6.6 -3.2,-7.1" fill="#ffffff"/><circle cx="-7.3" cy="1.1" r=".800" fill="#3e3d39" opacity=".55"/><circle cx="4.5" cy="-2.1" r=".800" fill="#3e3d39" opacity=".55"/><circle cx="-0.0" cy="-2.0" r=".800" fill="#3e3d39" opacity=".55"/><circle cx="3.0" cy="2.8" r=".800" fill="#3e3d39" opacity=".55"/><circle cx="5.0" cy="-0.7" r=".800" fill="#3e3d39" opacity=".55"/><circle cx="8.0" cy="3.7" r=".800" fill="#3e3d39" opacity=".55"/><circle cx="6.0" cy="-0.1" r=".800" fill="#3e3d39" opacity=".55"/><circle cx="-6.9" cy="-0.5" r=".800" fill="#3e3d39" opacity=".55"/><circle cx="-7.4" cy="4.7" r=".800" fill="#3e3d39" opacity=".55"/><circle cx="-7.9" cy="5.5" r=".800" fill="#3e3d39" opacity=".55"/><circle cx="6.9" cy="4.9" r=".800" fill="#3e3d39" opacity=".55"/><circle cx="-4.5" cy="-2.0" r=".800" fill="#3e3d39" opacity=".55"/><circle cx="-4.4" cy="4.0" r=".800" fill="#3e3d39" opacity=".55"/><circle cx="-1.7" cy="-1.5" r=".800" fill="#3e3d39" opacity=".55"/><circle cx="2.9" cy="4.6" r=".800" fill="#3e3d39" opacity=".55"/><circle cx="8.3" cy="-0.6" r=".800" fill="#3e3d39" opacity=".55"/><circle cx="-4.0" cy="2.3" r=".800" fill="#3e3d39" opacity=".55"/><circle cx="-4.3" cy="2.0" r=".800" fill="#3e3d39" opacity=".55"/><circle cx="-8.1" cy="0.2" r=".800" fill="#3e3d39" opacity=".55"/><circle cx="-7.2" cy="4.9" r=".800" fill="#3e3d39" opacity=".55"/><circle cx="-3.7" cy="2.2" r=".800" fill="#3e3d39" opacity=".55"/><circle cx="-4.7" cy="0.9" r=".800" fill="#3e3d39" opacity=".55"/><circle cx="4.7" cy="-1.7" r=".800" fill="#3e3d39" opacity=".55"/><circle cx="-2.8" cy="1.9" r=".800" fill="#3e3d39" opacity=".55"/><circle cx="-0.2" cy="2.9" r=".800" fill="#3e3d39" opacity=".55"/><circle cx="5.4" cy="-0.9" r=".800" fill="#3e3d39" opacity=".55"/><circle cx="5.8" cy="-0.9" r=".900" fill="#b4b3ad" opacity=".5"/><circle cx="3.4" cy="2.6" r=".900" fill="#b4b3ad" opacity=".5"/><circle cx="5.1" cy="3.9" r=".900" fill="#b4b3ad" opacity=".5"/><circle cx="6.5" cy="5.9" r=".900" fill="#b4b3ad" opacity=".5"/><circle cx="-8.3" cy="4.3" r=".900" fill="#b4b3ad" opacity=".5"/><circle cx="-4.1" cy="1.9" r=".900" fill="#b4b3ad" opacity=".5"/><circle cx="8.5" cy="-0.2" r=".900" fill="#b4b3ad" opacity=".5"/><path d="M-12.400 -1.500A12.400 7.400 0 0 1 -4 -7" fill="none" stroke="#b0a796" stroke-width=".900" opacity=".8"/></g></svg>
<svg class="a" style="left:1790px;top:215px;" width="120" height="120" viewBox="1790 215 120 120"><defs><linearGradient id="vcL" x1="0" y1="0" x2="1" y2="1"><stop offset="0" stop-color="#d6d6d6"/><stop offset="1" stop-color="#f1f1f1"/></linearGradient>
<linearGradient id="vcR" x1="0" y1="0" x2="1" y2="1"><stop offset="0" stop-color="#dedede"/><stop offset="1" stop-color="#f4f4f4"/></linearGradient></defs><polygon points="1806.500,259.400 1845,234.700 1886.500,253.300 1854.600,282.200" fill="#d9d9d9"/><polygon points="1806.500,259.400 1854.600,282.200 1853.400,323.200 1813.100,301.500" fill="url(#vcL)"/><polygon points="1854.600,282.200 1886.500,253.300 1883.500,289.500 1853.400,323.200" fill="url(#vcR)"/><path d="M1845 234.700L1886.500 253.300L1883.500 289.500L1853.400 323.200L1813.100 301.500M1854.600 282.200L1853.400 323.200M1854.600 282.200L1886.500 253.300" fill="none" stroke="#8a8a8a" stroke-width="1" stroke-dasharray="5 3.500"/><g font-family="Liberation Sans, sans-serif" fill="#8f8f8f" text-anchor="middle"><text transform="matrix(-0.842,0.540,-0.904,-0.428,1846.500,256.400)" x="0" y="3.400" font-size="9.600">BOTTOM</text><text transform="matrix(-0.904,-0.428,-0.155,-0.988,1831.600,292)" x="0" y="3.200" font-size="9">LEFT</text><text transform="matrix(-0.741,0.671,0.030,-1,1869.500,287)" x="0" y="3" font-size="8.400" opacity=".7">BACK</text></g><path d="M1806.500 259.400L1846.600 233.600" stroke="#f28a8a" stroke-width="1.600"/><path d="M1806.500 259.400L1864 286.600" stroke="#7fdc7f" stroke-width="1.700"/><path d="M1807 259.400L1813.100 302.500" stroke="#6464f2" stroke-width="2.400"/><g font-family="Liberation Sans, sans-serif" font-size="16.500"><text transform="translate(1848,234.200) scale(.72,1)" fill="#f49a9a">X</text><text transform="translate(1867.600,296.800) scale(.72,1)" fill="#8be38b">Y</text><text transform="translate(1809.400,316.600) scale(.8,1)" fill="#8c8cf6">Z</text></g></svg>
<div class="a" style="left:6px;top:962px;width:449.5px;height:37.5px;background:#f1f1f1;box-sizing:border-box;border:1.4px solid #c6c6c6;border-top-color:#f1f1f1;"></div>
<div class="t" style="left:43.80px;top:972.46px;font-size:17.30px;line-height:17.30px;color:#555;transform:scaleX(0.8406);">COMMENTS</div>
<svg class="a" style="left:423px;top:973px;" width="16" height="16" viewBox="0 0 16 16"><circle cx="8" cy="8" r="6.800" fill="#2b2b2b"/><rect x="4.200" y="6.900" width="7.600" height="2.200" fill="#f1f1f1"/><rect x="6.900" y="4.200" width="2.200" height="7.600" fill="#f1f1f1"/></svg>
<div class="a" style="left:448.1px;top:972.2px;width:1.9px;height:17px;background:#8e8e8e;"></div>
<div class="a" style="left:451.3px;top:975.4px;width:1.6px;height:10.6px;background:#a2a2a2;"></div>
<div class="a" style="left:782px;top:963px;width:356px;height:35.5px;background:#f1f1f1;"></div>
<div class="a" style="left:0px;top:1006.5px;width:1920px;height:70.5px;background:#f1f1f1;"></div>
<div class="a" style="left:0px;top:1006.4px;width:1920px;height:2.2px;background:#d6d6d6;"></div>
<div class="a" style="left:0px;top:1006.4px;width:201px;height:2.2px;background:#c6c6c6;"></div>
<div class="a" style="left:0px;top:1076.8px;width:1920px;height:3.2px;background:#1c1c1c;"></div>
<svg class="a" style="left:0px;top:1030px;" width="200" height="30" viewBox="0 1030 200 30"><g fill="#4d4d4f"><rect x="16.200" y="1034.200" width="3.300" height="20.800"/><path d="M20.800 1044.600L34.700 1034.600V1054.600z"/><path d="M52.500 1044.900L67.500 1035.300V1054.500z"/><rect x="69.200" y="1040.500" width="2.800" height="8.700"/><path d="M91.300 1033.300L109.200 1045L91.300 1056.700z"/><rect x="127.500" y="1040.500" width="2.800" height="8.700"/><path d="M146.700 1044.900L131.700 1035.300V1054.500z"/><path d="M180.800 1044.600L166.700 1034.600V1054.600z"/><rect x="181.300" y="1034.200" width="3.400" height="20.800"/></g></svg>
<svg class="a" style="left:780px;top:960px;" width="360" height="40" viewBox="780 960 360 40"><ellipse cx="798.400" cy="981.800" rx="11.200" ry="3.600" fill="none" stroke="#333" stroke-width="1.500" transform="rotate(-6 798.4 981.8)"/><path d="M788.200 986.600l5.600-3.600v6.400z" fill="#222"/><path d="M797.800 992.400V974.400h-2.600l4.100-5.800 4.100 5.800h-2.600v18z" fill="#fff" stroke="#333" stroke-width="1.200" stroke-linejoin="round"/><path d="M806.500 979.400c3.500 1 3.800 3.200 1.500 4.200" fill="none" stroke="#333" stroke-width="1.500"/><path d="M817.9 978.200h8.800l-4.400 5.600z" fill="#2e2e2e"/><path d="M838.400 976.900l5.400-7 2.500 3.800 8.400-3.400v6.600z" fill="#9a9a9a"/><rect x="836.900" y="977.600" width="22.400" height="14.400" fill="#fafafa" stroke="#50535a" stroke-width="1.600"/><rect x="841.600" y="982" width="13" height="5.800" fill="#a3a8ba" stroke="#50535a" stroke-width="1.300"/><path d="M880.600 992.200c-1.600-2.600-3.600-5.800-4.800-7.200-.9-1.200.5-2.400 1.800-1.400l2.600 2.400-1.400-9.400c-.3-1.800 1.800-2.200 2.300-.5l1.300 5.400-.1-8.800c0-1.900 2.500-1.900 2.600 0l.5 8.400 1.300-7.400c.4-1.800 2.700-1.400 2.500.4l-.8 8 2.400-5.400c.8-1.600 2.800-.7 2.200 1l-2.400 7.600c-.4 2.800-.6 5-1.700 6.900z" fill="#f0f0f4" stroke="#333" stroke-width="1.200" stroke-linejoin="round" transform="translate(875.5 0) scale(1.24 1) translate(-875.5 0)"/><path d="M926 983.400l6 6" stroke="#444" stroke-width="3.400" stroke-linecap="round"/><circle cx="921.500" cy="978.800" r="6" fill="#dceaea" stroke="#555" stroke-width="1.500"/><path d="M931 972.400h6.800M934.400 969.200v6.400M931 977.600h6.800" stroke="#333" stroke-width="1.200"/><rect x="954" y="970" width="22.800" height="21.800" fill="none" stroke="#444" stroke-width="1.500" stroke-dasharray="3 2.400"/><path d="M969.200 984.600l6 6" stroke="#3a3a3a" stroke-width="4" stroke-linecap="round"/><circle cx="962.800" cy="978.300" r="8.600" fill="#dbe9e9" stroke="#444" stroke-width="1.700"/><path d="M985 978.200h8.800l-4.400 5.600z" fill="#2e2e2e"/><rect x="1004.200" y="970.200" width="21.800" height="17" rx="1.500" fill="#f2f2f2" stroke="#6a6a6a" stroke-width="1.500"/><rect x="1007.300" y="973.200" width="15.600" height="10.800" rx="1.200" fill="#9fbce2" stroke="#2b4a8c" stroke-width="1.600"/><path d="M1011.400 988.200h7.400l1.600 3.600h-10.600z" fill="#f6f6f6" stroke="#6a6a6a" stroke-width="1.100"/><path d="M1030 978.200h8.800l-4.400 5.600z" fill="#2e2e2e"/><defs><linearGradient id="gg" x1="0" y1="0" x2="0" y2="1"><stop offset="0" stop-color="#ffffff"/><stop offset=".45" stop-color="#f4f4f6"/><stop offset="1" stop-color="#9aa3b8"/></linearGradient></defs><rect x="1050.600" y="970" width="21.800" height="22" rx="1" fill="url(#gg)" stroke="#555" stroke-width="1.600"/><path d="M1054.96 970v22M1050.600 974.40h21.800" stroke="#5c5f66" stroke-width="1.500"/><path d="M1059.32 970v22M1050.600 978.80h21.800" stroke="#5c5f66" stroke-width="1.500"/><path d="M1063.68 970v22M1050.600 983.20h21.800" stroke="#5c5f66" stroke-width="1.500"/><path d="M1068.04 970v22M1050.600 987.60h21.800" stroke="#5c5f66" stroke-width="1.500"/><path d="M1076.4 978.200h8.800l-4.400 5.600z" fill="#2e2e2e"/><rect x="1096.8" y="971.2" width="9.600" height="8.200" rx="1" fill="#a5c0e6" stroke="#2d4c8e" stroke-width="1.700"/><rect x="1099.8" y="973.8" width="3.600" height="3" fill="#8aaad8"/><rect x="1107.6" y="971.2" width="9.600" height="8.200" rx="1" fill="#a5c0e6" stroke="#2d4c8e" stroke-width="1.700"/><rect x="1110.6" y="973.8" width="3.600" height="3" fill="#8aaad8"/><rect x="1096.8" y="980.8" width="9.600" height="8.200" rx="1" fill="#a5c0e6" stroke="#2d4c8e" stroke-width="1.700"/><rect x="1099.8" y="983.4" width="3.600" height="3" fill="#8aaad8"/><rect x="1107.6" y="980.8" width="9.600" height="8.200" rx="1" fill="#a5c0e6" stroke="#2d4c8e" stroke-width="1.700"/><rect x="1110.6" y="983.4" width="3.600" height="3" fill="#8aaad8"/><path d="M1123.2 978.200h8.800l-4.400 5.600z" fill="#2e2e2e"/></svg>
<svg class="a" style="left:200px;top:1020px;" width="1230" height="57" viewBox="200 1020 1230 57"><rect x="231.300" y="1067.700" width="1152.900" height="2.500" fill="#c9c9c9"/><rect x="231.10" y="1060.200" width="2.400" height="8.500" fill="#c9c9c9"/><rect x="265.80" y="1060.200" width="2.400" height="8.500" fill="#c9c9c9"/><rect x="301.80" y="1060.200" width="2.400" height="8.500" fill="#c9c9c9"/><rect x="337.80" y="1060.200" width="2.400" height="8.500" fill="#c9c9c9"/><rect x="373.80" y="1060.200" width="2.400" height="8.500" fill="#c9c9c9"/><rect x="409.80" y="1060.200" width="2.400" height="8.500" fill="#c9c9c9"/><rect x="445.80" y="1060.200" width="2.400" height="8.500" fill="#c9c9c9"/><rect x="481.80" y="1060.200" width="2.400" height="8.500" fill="#c9c9c9"/><rect x="517.80" y="1060.200" width="2.400" height="8.500" fill="#c9c9c9"/><rect x="553.80" y="1060.200" width="2.400" height="8.500" fill="#c9c9c9"/><rect x="589.80" y="1060.200" width="2.400" height="8.500" fill="#c9c9c9"/><rect x="625.80" y="1060.200" width="2.400" height="8.500" fill="#c9c9c9"/><rect x="661.80" y="1060.200" width="2.400" height="8.500" fill="#c9c9c9"/><rect x="697.80" y="1060.200" width="2.400" height="8.500" fill="#c9c9c9"/><rect x="733.80" y="1060.200" width="2.400" height="8.500" fill="#c9c9c9"/><rect x="769.80" y="1060.200" width="2.400" height="8.500" fill="#c9c9c9"/><rect x="805.80" y="1060.200" width="2.400" height="8.500" fill="#c9c9c9"/><rect x="841.80" y="1060.200" width="2.400" height="8.500" fill="#c9c9c9"/><rect x="877.80" y="1060.200" width="2.400" height="8.500" fill="#c9c9c9"/><rect x="913.80" y="1060.200" width="2.400" height="8.500" fill="#c9c9c9"/><rect x="949.80" y="1060.200" width="2.400" height="8.500" fill="#c9c9c9"/><rect x="985.80" y="1060.200" width="2.400" height="8.500" fill="#c9c9c9"/><rect x="1021.80" y="1060.200" width="2.400" height="8.500" fill="#c9c9c9"/><rect x="1057.80" y="1060.200" width="2.400" height="8.500" fill="#c9c9c9"/><rect x="1093.80" y="1060.200" width="2.400" height="8.500" fill="#c9c9c9"/><rect x="1129.80" y="1060.200" width="2.400" height="8.500" fill="#c9c9c9"/><rect x="1165.80" y="1060.200" width="2.400" height="8.500" fill="#c9c9c9"/><rect x="1201.80" y="1060.200" width="2.400" height="8.500" fill="#c9c9c9"/><rect x="1237.80" y="1060.200" width="2.400" height="8.500" fill="#c9c9c9"/><rect x="1273.80" y="1060.200" width="2.400" height="8.500" fill="#c9c9c9"/><rect x="1309.80" y="1060.200" width="2.400" height="8.500" fill="#c9c9c9"/><rect x="1345.80" y="1060.200" width="2.400" height="8.500" fill="#c9c9c9"/><rect x="1381.80" y="1060.200" width="2.400" height="8.500" fill="#c9c9c9"/><rect x="219.10" y="1031.5" width="2.900" height="2.900" fill="#1e88e5"/><rect x="238.60" y="1031.5" width="2.900" height="2.900" fill="#1e88e5"/><rect x="219.10" y="1050.9" width="2.900" height="2.900" fill="#1e88e5"/><path d="M223.80 1033.500H236.90M221.10 1036.200V1049M239.25 1036.200V1041.500M223.80 1051.600H230.00" stroke="#5a5a5a" stroke-width="1.400" fill="none"/><polygon points="230.90,1054.900 232.80,1050.600 235.60,1053.600" fill="#666"/><polygon points="232.80,1050.250 239.10,1044.900 242.50,1048.100 235.90,1053.700" fill="#fbba45"/><ellipse cx="240.90" cy="1045.700" rx="2.500" ry="1.700" fill="#f6474a" transform="rotate(42 240.90 1045.7)"/><polygon points="255,1052.400 268.40,1052.400 272.80,1048 272.80,1050.400 268.40,1054.900 255,1054.900" fill="#b9b9b9"/><polygon points="255,1036.200 268.40,1036.200 268.40,1050.300 255,1050.300" fill="#6ab0e4"/><polygon points="255,1036.200 259.40,1031.800 272.80,1031.800 268.40,1036.200" fill="#8accfa"/><polygon points="268.40,1036.200 272.80,1031.800 272.80,1045.900 268.40,1050.300" fill="#4994cf"/><path d="M276.75 1034.500V1050.900" stroke="#333" stroke-width="1.300"/><path d="M274.40 1035.800h4.700l-2.350-3.800z" fill="#333"/><polygon points="291,1052.400 304.40,1052.400 308.80,1048 308.80,1050.400 304.40,1054.900 291,1054.900" fill="#b9b9b9"/><polygon points="291,1036.200 304.40,1036.200 304.40,1050.300 291,1050.300" fill="#6ab0e4"/><polygon points="291,1036.200 295.40,1031.800 308.80,1031.800 304.40,1036.200" fill="#8accfa"/><polygon points="304.40,1036.200 308.80,1031.800 308.80,1045.900 304.40,1050.300" fill="#4994cf"/><path d="M312.75 1034.500V1050.900" stroke="#333" stroke-width="1.300"/><path d="M310.40 1035.800h4.700l-2.350-3.800z" fill="#333"/><rect x="327.10" y="1031.5" width="2.900" height="2.900" fill="#1e88e5"/><rect x="346.60" y="1031.5" width="2.900" height="2.900" fill="#1e88e5"/><rect x="327.10" y="1050.9" width="2.900" height="2.900" fill="#1e88e5"/><path d="M331.80 1033.500H344.90M329.10 1036.200V1049M347.25 1036.200V1041.500M331.80 1051.600H338.00" stroke="#5a5a5a" stroke-width="1.400" fill="none"/><polygon points="338.90,1054.900 340.80,1050.600 343.60,1053.600" fill="#666"/><polygon points="340.80,1050.250 347.10,1044.900 350.50,1048.100 343.90,1053.700" fill="#fbba45"/><ellipse cx="348.90" cy="1045.700" rx="2.500" ry="1.700" fill="#f6474a" transform="rotate(42 348.90 1045.7)"/><polygon points="363.90,1041.300 369.50,1035.600 383,1035.600 377.50,1041.300" fill="#f4f4f4"/><polygon points="363.90,1041.300 377.50,1041.300 377.50,1054.200 363.90,1054.200" fill="#dcdcdc"/><polygon points="377.50,1041.300 383,1035.600 383,1048.800 377.50,1054.200" fill="#cfcfcf"/><path d="M374.00 1035.250H369.50L363.40 1041.300V1054.500H377.50L383.10 1048.800V1044" fill="none" stroke="#707070" stroke-width="1.300"/><circle cx="380.10" cy="1038.250" r="3.400" fill="#f1f1f1"/><polygon points="380.10,1032.05 380.98,1036.13 384.48,1033.87 382.22,1037.37 386.30,1038.25 382.22,1039.13 384.48,1042.63 380.98,1040.37 380.10,1044.45 379.22,1040.37 375.72,1042.63 377.98,1039.13 373.90,1038.25 377.98,1037.37 375.72,1033.87 379.22,1036.13" fill="#ffa800" stroke="#f0a020" stroke-width=".4"/><polygon points="399,1052.400 412.40,1052.400 416.80,1048 416.80,1050.400 412.40,1054.900 399,1054.900" fill="#b9b9b9"/><polygon points="399,1036.200 412.40,1036.200 412.40,1050.300 399,1050.300" fill="#6ab0e4"/><polygon points="399,1036.200 403.40,1031.800 416.80,1031.800 412.40,1036.200" fill="#8accfa"/><polygon points="412.40,1036.200 416.80,1031.800 416.80,1045.900 412.40,1050.300" fill="#4994cf"/><path d="M420.75 1034.500V1050.900" stroke="#333" stroke-width="1.300"/><path d="M418.40 1035.800h4.700l-2.350-3.800z" fill="#333"/><polygon points="435,1052.400 448.40,1052.400 452.80,1048 452.80,1050.400 448.40,1054.900 435,1054.900" fill="#b9b9b9"/><polygon points="435,1036.200 448.40,1036.200 448.40,1050.300 435,1050.300" fill="#6ab0e4"/><polygon points="435,1036.200 439.40,1031.800 452.80,1031.800 448.40,1036.200" fill="#8accfa"/><polygon points="448.40,1036.200 452.80,1031.800 452.80,1045.900 448.40,1050.300" fill="#4994cf"/><path d="M456.75 1034.500V1050.900" stroke="#333" stroke-width="1.300"/><path d="M454.40 1035.800h4.700l-2.350-3.800z" fill="#333"/><rect x="471.70" y="1039.600" width="4.500" height="9.200" fill="#b9cff0" stroke="#2b4272" stroke-width="1.300"/><rect x="480.80" y="1039.600" width="4.500" height="9.200" fill="#b9cff0" stroke="#2b4272" stroke-width="1.300"/><rect x="489.85" y="1039.600" width="4.500" height="9.200" fill="#b9cff0" stroke="#2b4272" stroke-width="1.300"/><polygon points="507.30,1038.100 512.50,1032.400 519.50,1032.400 517.00,1036.500" fill="#f4f4f4"/><path d="M507.60 1038.300H517.00A8.500 8.500 0 0 1 525.50 1046.800V1054.200H507.60z" fill="#dcdcdc"/><polygon points="525.50,1048.600 530.30,1044 530.30,1049.300 525.60,1054.300" fill="#c4c4c4"/><path d="M517.70 1035.700L520.00 1032A10.500 10.500 0 0 1 530.80 1041.300L526.60 1044.200A9.500 9.500 0 0 0 517.70 1035.700z" fill="#6ab0e4"/><path d="M518.10 1032.400H512.50L507.30 1038.100V1054.500H525.60L530.30 1049.300V1044.400" fill="none" stroke="#707070" stroke-width="1.300"/><rect x="543.10" y="1031.5" width="2.900" height="2.900" fill="#1e88e5"/><rect x="562.60" y="1031.5" width="2.900" height="2.900" fill="#1e88e5"/><rect x="543.10" y="1050.9" width="2.900" height="2.900" fill="#1e88e5"/><path d="M547.80 1033.500H560.90M545.10 1036.200V1049M563.25 1036.200V1041.500M547.80 1051.600H554.00" stroke="#5a5a5a" stroke-width="1.400" fill="none"/><polygon points="554.90,1054.900 556.80,1050.600 559.60,1053.600" fill="#666"/><polygon points="556.80,1050.250 563.10,1044.900 566.50,1048.100 559.90,1053.700" fill="#fbba45"/><ellipse cx="564.90" cy="1045.700" rx="2.500" ry="1.700" fill="#f6474a" transform="rotate(42 564.90 1045.7)"/><polygon points="579,1052.400 592.40,1052.400 596.80,1048 596.80,1050.400 592.40,1054.900 579,1054.900" fill="#b9b9b9"/><polygon points="579,1036.200 592.40,1036.200 592.40,1050.300 579,1050.300" fill="#6ab0e4"/><polygon points="579,1036.200 583.40,1031.800 596.80,1031.800 592.40,1036.200" fill="#8accfa"/><polygon points="592.40,1036.200 596.80,1031.800 596.80,1045.900 592.40,1050.300" fill="#4994cf"/><path d="M600.75 1034.500V1050.900" stroke="#333" stroke-width="1.300"/><path d="M598.40 1035.800h4.700l-2.350-3.800z" fill="#333"/><rect x="615.10" y="1031.5" width="2.900" height="2.900" fill="#1e88e5"/><rect x="634.60" y="1031.5" width="2.900" height="2.900" fill="#1e88e5"/><rect x="615.10" y="1050.9" width="2.900" height="2.900" fill="#1e88e5"/><path d="M619.80 1033.500H632.90M617.10 1036.200V1049M635.25 1036.200V1041.500M619.80 1051.600H626.00" stroke="#5a5a5a" stroke-width="1.400" fill="none"/><polygon points="626.90,1054.900 628.80,1050.600 631.60,1053.600" fill="#666"/><polygon points="628.80,1050.250 635.10,1044.900 638.50,1048.100 631.90,1053.700" fill="#fbba45"/><ellipse cx="636.90" cy="1045.700" rx="2.500" ry="1.700" fill="#f6474a" transform="rotate(42 636.90 1045.7)"/><polygon points="651,1052.400 664.40,1052.400 668.80,1048 668.80,1050.400 664.40,1054.900 651,1054.900" fill="#b9b9b9"/><polygon points="651,1036.200 664.40,1036.200 664.40,1050.300 651,1050.300" fill="#6ab0e4"/><polygon points="651,1036.200 655.40,1031.800 668.80,1031.800 664.40,1036.200" fill="#8accfa"/><polygon points="664.40,1036.200 668.80,1031.800 668.80,1045.900 664.40,1050.300" fill="#4994cf"/><path d="M672.75 1034.500V1050.900" stroke="#333" stroke-width="1.300"/><path d="M670.40 1035.800h4.700l-2.350-3.800z" fill="#333"/><polygon points="694.90,1034.800 708.40,1034.800 708.40,1047.600 694.90,1047.600" fill="#6ab0e4"/><polygon points="694.90,1034.800 697.30,1031.700 711,1031.700 708.40,1034.800" fill="#8accfa"/><polygon points="708.40,1034.800 711,1031.700 711,1044.600 708.40,1047.600" fill="#4994cf"/><polygon points="687.20,1042.500 700.70,1042.500 700.70,1055.300 687.20,1055.300" fill="#6ab0e4"/><polygon points="687.20,1042.500 689.60,1039.600 694.90,1039.600 694.90,1042.500" fill="#8accfa"/><polygon points="700.70,1047.600 703.10,1047.600 703.10,1052.400 700.70,1055.300" fill="#4994cf"/><rect x="723.10" y="1031.5" width="2.900" height="2.900" fill="#1e88e5"/><rect x="742.60" y="1031.5" width="2.900" height="2.900" fill="#1e88e5"/><rect x="723.10" y="1050.9" width="2.900" height="2.900" fill="#1e88e5"/><path d="M727.80 1033.500H740.90M725.10 1036.200V1049M743.25 1036.200V1041.500M727.80 1051.600H734.00" stroke="#5a5a5a" stroke-width="1.400" fill="none"/><polygon points="734.90,1054.900 736.80,1050.600 739.60,1053.600" fill="#666"/><polygon points="736.80,1050.250 743.10,1044.900 746.50,1048.100 739.90,1053.700" fill="#fbba45"/><ellipse cx="744.90" cy="1045.700" rx="2.500" ry="1.700" fill="#f6474a" transform="rotate(42 744.90 1045.7)"/><rect x="759.10" y="1031.5" width="2.900" height="2.900" fill="#1e88e5"/><rect x="778.60" y="1031.5" width="2.900" height="2.900" fill="#1e88e5"/><rect x="759.10" y="1050.9" width="2.900" height="2.900" fill="#1e88e5"/><path d="M763.80 1033.500H776.90M761.10 1036.200V1049M779.25 1036.200V1041.500M763.80 1051.600H770.00" stroke="#5a5a5a" stroke-width="1.400" fill="none"/><polygon points="770.90,1054.900 772.80,1050.600 775.60,1053.600" fill="#666"/><polygon points="772.80,1050.250 779.10,1044.900 782.50,1048.100 775.90,1053.700" fill="#fbba45"/><ellipse cx="780.90" cy="1045.700" rx="2.500" ry="1.700" fill="#f6474a" transform="rotate(42 780.90 1045.7)"/><polygon points="795,1052.400 808.40,1052.400 812.80,1048 812.80,1050.400 808.40,1054.900 795,1054.900" fill="#b9b9b9"/><polygon points="795,1036.200 808.40,1036.200 808.40,1050.300 795,1050.300" fill="#6ab0e4"/><polygon points="795,1036.200 799.40,1031.800 812.80,1031.800 808.40,1036.200" fill="#8accfa"/><polygon points="808.40,1036.200 812.80,1031.800 812.80,1045.900 808.40,1050.300" fill="#4994cf"/><path d="M816.75 1034.500V1050.900" stroke="#333" stroke-width="1.300"/><path d="M814.40 1035.800h4.700l-2.350-3.800z" fill="#333"/><rect x="831.10" y="1031.5" width="2.900" height="2.900" fill="#1e88e5"/><rect x="850.60" y="1031.5" width="2.900" height="2.900" fill="#1e88e5"/><rect x="831.10" y="1050.9" width="2.900" height="2.900" fill="#1e88e5"/><path d="M835.80 1033.500H848.90M833.10 1036.200V1049M851.25 1036.200V1041.500M835.80 1051.600H842.00" stroke="#5a5a5a" stroke-width="1.400" fill="none"/><polygon points="842.90,1054.900 844.80,1050.600 847.60,1053.600" fill="#666"/><polygon points="844.80,1050.250 851.10,1044.900 854.50,1048.100 847.90,1053.700" fill="#fbba45"/><ellipse cx="852.90" cy="1045.700" rx="2.500" ry="1.700" fill="#f6474a" transform="rotate(42 852.90 1045.7)"/><polygon points="867,1052.400 880.40,1052.400 884.80,1048 884.80,1050.400 880.40,1054.900 867,1054.900" fill="#b9b9b9"/><polygon points="867,1036.200 880.40,1036.200 880.40,1050.300 867,1050.300" fill="#6ab0e4"/><polygon points="867,1036.200 871.40,1031.800 884.80,1031.800 880.40,1036.200" fill="#8accfa"/><polygon points="880.40,1036.200 884.80,1031.800 884.80,1045.900 880.40,1050.300" fill="#4994cf"/><path d="M888.75 1034.500V1050.900" stroke="#333" stroke-width="1.300"/><path d="M886.40 1035.800h4.700l-2.350-3.800z" fill="#333"/><rect x="903.10" y="1031.5" width="2.900" height="2.900" fill="#1e88e5"/><rect x="922.60" y="1031.5" width="2.900" height="2.900" fill="#1e88e5"/><rect x="903.10" y="1050.9" width="2.900" height="2.900" fill="#1e88e5"/><path d="M907.80 1033.500H920.90M905.10 1036.200V1049M923.25 1036.200V1041.500M907.80 1051.600H914.00" stroke="#5a5a5a" stroke-width="1.400" fill="none"/><polygon points="914.90,1054.900 916.80,1050.600 919.60,1053.600" fill="#666"/><polygon points="916.80,1050.250 923.10,1044.900 926.50,1048.100 919.90,1053.700" fill="#fbba45"/><ellipse cx="924.90" cy="1045.700" rx="2.500" ry="1.700" fill="#f6474a" transform="rotate(42 924.90 1045.7)"/><polygon points="939,1052.400 952.40,1052.400 956.80,1048 956.80,1050.400 952.40,1054.900 939,1054.900" fill="#b9b9b9"/><polygon points="939,1036.200 952.40,1036.200 952.40,1050.300 939,1050.300" fill="#6ab0e4"/><polygon points="939,1036.200 943.40,1031.800 956.80,1031.800 952.40,1036.200" fill="#8accfa"/><polygon points="952.40,1036.200 956.80,1031.800 956.80,1045.900 952.40,1050.300" fill="#4994cf"/><path d="M960.75 1034.500V1050.900" stroke="#333" stroke-width="1.300"/><path d="M958.40 1035.800h4.700l-2.350-3.800z" fill="#333"/><rect x="979.90" y="1032.400" width="15.700" height="21.700" rx="1.600" fill="#f6f6f6" stroke="#858585" stroke-width="1.400"/><path d="M976.60 1041.1L998.90 1036.6" stroke="#c2e0f8" stroke-width="3.600" stroke-linecap="round"/><path d="M976.60 1045.7L998.90 1041.2" stroke="#c2e0f8" stroke-width="3.600" stroke-linecap="round"/><path d="M976.60 1050.2L998.90 1045.7" stroke="#c2e0f8" stroke-width="3.600" stroke-linecap="round"/><path d="M976.60 1041.1L998.90 1036.6" stroke="#3297e8" stroke-width="1.400" stroke-linecap="round"/><path d="M976.60 1045.7L998.90 1041.2" stroke="#3297e8" stroke-width="1.400" stroke-linecap="round"/><path d="M976.60 1050.2L998.90 1045.7" stroke="#3297e8" stroke-width="1.400" stroke-linecap="round"/><rect x="1015.90" y="1032.400" width="15.700" height="21.700" rx="1.600" fill="#f6f6f6" stroke="#858585" stroke-width="1.400"/><path d="M1012.60 1041.1L1034.90 1036.6" stroke="#c2e0f8" stroke-width="3.600" stroke-linecap="round"/><path d="M1012.60 1045.7L1034.90 1041.2" stroke="#c2e0f8" stroke-width="3.600" stroke-linecap="round"/><path d="M1012.60 1050.2L1034.90 1045.7" stroke="#c2e0f8" stroke-width="3.600" stroke-linecap="round"/><path d="M1012.60 1041.1L1034.90 1036.6" stroke="#3297e8" stroke-width="1.400" stroke-linecap="round"/><path d="M1012.60 1045.7L1034.90 1041.2" stroke="#3297e8" stroke-width="1.400" stroke-linecap="round"/><path d="M1012.60 1050.2L1034.90 1045.7" stroke="#3297e8" stroke-width="1.400" stroke-linecap="round"/><polygon points="1047,1052.400 1060.40,1052.400 1064.80,1048 1064.80,1050.400 1060.40,1054.900 1047,1054.900" fill="#b9b9b9"/><polygon points="1047,1036.200 1060.40,1036.200 1060.40,1050.300 1047,1050.300" fill="#6ab0e4"/><polygon points="1047,1036.200 1051.40,1031.800 1064.80,1031.800 1060.40,1036.200" fill="#8accfa"/><polygon points="1060.40,1036.200 1064.80,1031.800 1064.80,1045.900 1060.40,1050.300" fill="#4994cf"/><path d="M1068.75 1034.500V1050.900" stroke="#333" stroke-width="1.300"/><path d="M1066.40 1035.800h4.700l-2.350-3.800z" fill="#333"/><polygon points="1083,1052.400 1096.40,1052.400 1100.80,1048 1100.80,1050.400 1096.40,1054.900 1083,1054.900" fill="#b9b9b9"/><polygon points="1083,1036.200 1096.40,1036.200 1096.40,1050.300 1083,1050.300" fill="#6ab0e4"/><polygon points="1083,1036.200 1087.40,1031.800 1100.80,1031.800 1096.40,1036.200" fill="#8accfa"/><polygon points="1096.40,1036.200 1100.80,1031.800 1100.80,1045.900 1096.40,1050.300" fill="#4994cf"/><path d="M1104.75 1034.500V1050.900" stroke="#333" stroke-width="1.300"/><path d="M1102.40 1035.800h4.700l-2.350-3.800z" fill="#333"/><polygon points="1119,1052.400 1132.40,1052.400 1136.80,1048 1136.80,1050.400 1132.40,1054.900 1119,1054.900" fill="#b9b9b9"/><polygon points="1119,1036.200 1132.40,1036.200 1132.40,1050.300 1119,1050.300" fill="#6ab0e4"/><polygon points="1119,1036.200 1123.40,1031.800 1136.80,1031.800 1132.40,1036.200" fill="#8accfa"/><polygon points="1132.40,1036.200 1136.80,1031.800 1136.80,1045.900 1132.40,1050.300" fill="#4994cf"/><path d="M1140.75 1034.500V1050.900" stroke="#333" stroke-width="1.300"/><path d="M1138.40 1035.800h4.700l-2.350-3.800z" fill="#333"/><rect x="1155.10" y="1031.5" width="2.900" height="2.900" fill="#1e88e5"/><rect x="1174.60" y="1031.5" width="2.900" height="2.900" fill="#1e88e5"/><rect x="1155.10" y="1050.9" width="2.900" height="2.900" fill="#1e88e5"/><path d="M1159.80 1033.500H1172.90M1157.10 1036.200V1049M1175.25 1036.200V1041.500M1159.80 1051.600H1166.00" stroke="#5a5a5a" stroke-width="1.400" fill="none"/><polygon points="1166.90,1054.900 1168.80,1050.600 1171.60,1053.600" fill="#666"/><polygon points="1168.80,1050.250 1175.10,1044.900 1178.50,1048.100 1171.90,1053.700" fill="#fbba45"/><ellipse cx="1176.90" cy="1045.700" rx="2.500" ry="1.700" fill="#f6474a" transform="rotate(42 1176.90 1045.7)"/><polygon points="1191,1052.400 1204.40,1052.400 1208.80,1048 1208.80,1050.400 1204.40,1054.900 1191,1054.900" fill="#b9b9b9"/><polygon points="1191,1036.200 1204.40,1036.200 1204.40,1050.300 1191,1050.300" fill="#6ab0e4"/><polygon points="1191,1036.200 1195.40,1031.800 1208.80,1031.800 1204.40,1036.200" fill="#8accfa"/><polygon points="1204.40,1036.200 1208.80,1031.800 1208.80,1045.900 1204.40,1050.300" fill="#4994cf"/><path d="M1212.75 1034.500V1050.900" stroke="#333" stroke-width="1.300"/><path d="M1210.40 1035.800h4.700l-2.350-3.800z" fill="#333"/><polygon points="1227.30,1038.100 1232.50,1032.400 1239.50,1032.400 1237.00,1036.500" fill="#f4f4f4"/><path d="M1227.60 1038.300H1237.00A8.500 8.500 0 0 1 1245.50 1046.800V1054.200H1227.60z" fill="#dcdcdc"/><polygon points="1245.50,1048.600 1250.30,1044 1250.30,1049.300 1245.60,1054.300" fill="#c4c4c4"/><path d="M1237.70 1035.700L1240.00 1032A10.500 10.500 0 0 1 1250.80 1041.300L1246.60 1044.200A9.500 9.500 0 0 0 1237.70 1035.700z" fill="#6ab0e4"/><path d="M1238.10 1032.400H1232.50L1227.30 1038.100V1054.500H1245.60L1250.30 1049.300V1044.400" fill="none" stroke="#707070" stroke-width="1.300"/><polygon points="1263,1052.400 1276.40,1052.400 1280.80,1048 1280.80,1050.400 1276.40,1054.900 1263,1054.900" fill="#b9b9b9"/><polygon points="1263,1036.200 1276.40,1036.200 1276.40,1050.300 1263,1050.300" fill="#6ab0e4"/><polygon points="1263,1036.200 1267.40,1031.800 1280.80,1031.800 1276.40,1036.200" fill="#8accfa"/><polygon points="1276.40,1036.200 1280.80,1031.800 1280.80,1045.900 1276.40,1050.300" fill="#4994cf"/><path d="M1284.75 1034.500V1050.900" stroke="#333" stroke-width="1.300"/><path d="M1282.40 1035.800h4.700l-2.350-3.800z" fill="#333"/><polygon points="1299,1052.400 1312.40,1052.400 1316.80,1048 1316.80,1050.400 1312.40,1054.900 1299,1054.900" fill="#b9b9b9"/><polygon points="1299,1036.200 1312.40,1036.200 1312.40,1050.300 1299,1050.300" fill="#6ab0e4"/><polygon points="1299,1036.200 1303.40,1031.800 1316.80,1031.800 1312.40,1036.200" fill="#8accfa"/><polygon points="1312.40,1036.200 1316.80,1031.800 1316.80,1045.900 1312.40,1050.300" fill="#4994cf"/><path d="M1320.75 1034.500V1050.900" stroke="#333" stroke-width="1.300"/><path d="M1318.40 1035.800h4.700l-2.350-3.800z" fill="#333"/><polygon points="1335,1052.400 1348.40,1052.400 1352.80,1048 1352.80,1050.400 1348.40,1054.900 1335,1054.900" fill="#b9b9b9"/><polygon points="1335,1036.200 1348.40,1036.200 1348.40,1050.300 1335,1050.300" fill="#6ab0e4"/><polygon points="1335,1036.200 1339.40,1031.800 1352.80,1031.800 1348.40,1036.200" fill="#8accfa"/><polygon points="1348.40,1036.200 1352.80,1031.800 1352.80,1045.900 1348.40,1050.300" fill="#4994cf"/><path d="M1356.75 1034.500V1050.900" stroke="#333" stroke-width="1.300"/><path d="M1354.40 1035.800h4.700l-2.350-3.800z" fill="#333"/><polygon points="1371,1052.400 1384.40,1052.400 1388.80,1048 1388.80,1050.400 1384.40,1054.900 1371,1054.900" fill="#b9b9b9"/><polygon points="1371,1036.200 1384.40,1036.200 1384.40,1050.300 1371,1050.300" fill="#6ab0e4"/><polygon points="1371,1036.200 1375.40,1031.800 1388.80,1031.800 1384.40,1036.200" fill="#8accfa"/><polygon points="1384.40,1036.200 1388.80,1031.800 1388.80,1045.900 1384.40,1050.300" fill="#4994cf"/><path d="M1392.75 1034.500V1050.900" stroke="#333" stroke-width="1.300"/><path d="M1390.40 1035.800h4.700l-2.350-3.800z" fill="#333"/><rect x="473.600" y="1061.600" width="14" height="13" rx="2.200" fill="#d3dae6" stroke="#a4abba" stroke-width="1.200"/><path d="M476.800 1068.200h7.600M480.600 1064.400v7.600" stroke="#111" stroke-width="1.900"/><path d="M1391.800 1022.600h18.400v5.600l-7.800 8v33.200h-2.700v-33.200l-7.900-8z" fill="#585858"/></svg>
<svg class="a" style="left:1875.8px;top:1032.5px;" width="25" height="25" viewBox="0 0 25 25"><g transform="translate(12.500,12.500)" fill="#9a9a9a"><rect x="-2.500" y="-12" width="5" height="7" rx=".8" transform="rotate(0)"/><rect x="-2.500" y="-12" width="5" height="7" rx=".8" transform="rotate(45)"/><rect x="-2.500" y="-12" width="5" height="7" rx=".8" transform="rotate(90)"/><rect x="-2.500" y="-12" width="5" height="7" rx=".8" transform="rotate(135)"/><rect x="-2.500" y="-12" width="5" height="7" rx=".8" transform="rotate(180)"/><rect x="-2.500" y="-12" width="5" height="7" rx=".8" transform="rotate(225)"/><rect x="-2.500" y="-12" width="5" height="7" rx=".8" transform="rotate(270)"/><rect x="-2.500" y="-12" width="5" height="7" rx=".8" transform="rotate(315)"/><circle r="8.600"/><circle r="3.800" fill="#f0f0f0"/></g></svg>
</body></html>
